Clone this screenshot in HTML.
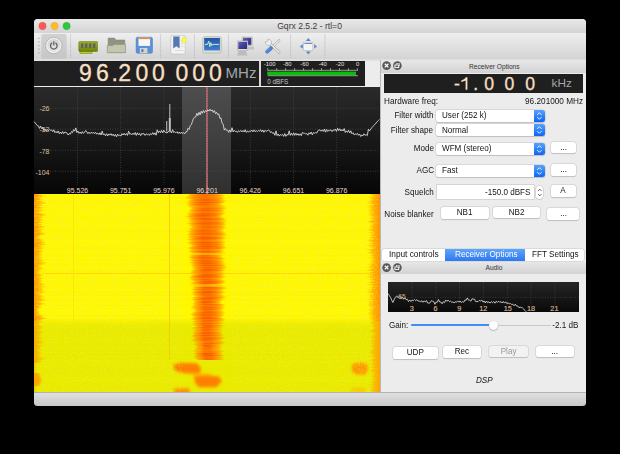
<!DOCTYPE html><html><head><meta charset="utf-8"><style>
*{margin:0;padding:0;box-sizing:border-box}
html,body{width:620px;height:454px;overflow:hidden;background:#000}
body{position:relative;font-family:"Liberation Sans",sans-serif;color:#1a1a1a}
.a{position:absolute}
.t{position:absolute;white-space:nowrap;line-height:1}
.win{position:absolute;left:34px;top:19px;width:552px;height:386px;border-radius:4px;background:#ececec;overflow:hidden}
.title{left:34px;top:19px;width:552px;height:14px;background:linear-gradient(#e9e9e9,#d3d3d3);border-radius:4px 4px 0 0}
.tl{position:absolute;top:22.3px;width:7.4px;height:7.4px;border-radius:50%}
.tb{left:34px;top:33px;width:552px;height:28px;background:linear-gradient(#efefef,#d4d4d4 92%,#dcdcdc 93%,#e2e2e2)}
.sep{position:absolute;top:36px;height:22px;width:1px;border-left:1px dotted #b0b0b0}
.dark{background:#1f1f1f}
.combo{position:absolute;left:436.2px;width:108.4px;height:12px;background:#fff;border-radius:2.5px;box-shadow:0 0 0 0.5px #c8c8c8,0 0.8px 0.8px #b8b8b8}
.combo .bl{position:absolute;right:0;top:0;width:10.8px;height:100%;background:linear-gradient(#55a2fa,#0f66f6);border-radius:0 2.5px 2.5px 0}
.combo svg{position:absolute;right:0;top:0}
.combo span{position:absolute;left:5.8px;top:1.6px;font-size:8.8px;line-height:1;white-space:nowrap;color:#141414;transform:scaleX(0.92);transform-origin:left}
.btn{position:absolute;height:11.8px;background:#fff;border-radius:2.5px;box-shadow:0 0 0 0.5px #c8c8c8,0 0.8px 0.8px #b8b8b8;font-size:8.8px;line-height:11.9px;text-align:center;color:#141414}
.btn b{font-weight:normal;display:inline-block;transform:scaleX(0.92)}
.lbl{position:absolute;font-size:8.8px;line-height:1;white-space:nowrap;color:#141414;transform:scaleX(0.92);transform-origin:left}
.lr{transform-origin:right}
.dtitle{position:absolute;left:381px;width:205px;height:12.5px;background:linear-gradient(#e7e7e7,#d3d3d3)}
.dbtn{position:absolute;width:8.6px;height:8.6px;border-radius:50%;background:#5a5a5a}
</style></head><body>
<div class="win"></div>
<div class="a title"></div>
<svg class="a" style="left:34px;top:19px" width="40" height="14" viewBox="34 19 40 14"><circle cx="42.5" cy="26" r="3.65" fill="#fc5b55" stroke="#e5453f" stroke-width="0.4"/><circle cx="54.6" cy="26" r="3.65" fill="#fdbb2d" stroke="#e0a024" stroke-width="0.4"/><circle cx="66.6" cy="26" r="3.65" fill="#2fc640" stroke="#25a834" stroke-width="0.4"/></svg>
<div class="t" style="left:277.2px;top:22px;font-size:8.6px;color:#3a3a3a">Gqrx 2.5.2 - rtl=0</div>
<div class="a tb"></div>
<svg class="a" style="left:0;top:0" width="620" height="62" viewBox="0 0 620 62">
<defs>
<linearGradient id="pbg" x1="0" y1="0" x2="0" y2="1"><stop offset="0" stop-color="#d2d2d2"/><stop offset="1" stop-color="#c6c6c6"/></linearGradient>
<linearGradient id="pin" x1="0" y1="0" x2="0" y2="1"><stop offset="0" stop-color="#d2d2d2"/><stop offset="1" stop-color="#e6e6e6"/></linearGradient>
<linearGradient id="grn" x1="0" y1="0" x2="0" y2="1"><stop offset="0" stop-color="#9db21c"/><stop offset="1" stop-color="#6f820a"/></linearGradient>
<linearGradient id="scr" x1="0" y1="0" x2="0" y2="1"><stop offset="0" stop-color="#2556a8"/><stop offset="1" stop-color="#3c7cd2"/></linearGradient>
<linearGradient id="nscr" x1="0" y1="0" x2="1" y2="1"><stop offset="0" stop-color="#6464b4"/><stop offset="0.5" stop-color="#40409a"/><stop offset="1" stop-color="#30307c"/></linearGradient>
<radialGradient id="sun"><stop offset="0" stop-color="#ffffa0"/><stop offset="0.6" stop-color="#f4ee30"/><stop offset="1" stop-color="#f4ee30" stop-opacity="0"/></radialGradient>
</defs>
<rect x="41.3" y="34" width="25.4" height="24.7" rx="2" fill="url(#pbg)"/>
<circle cx="53.8" cy="45.5" r="8.2" fill="#f0f0f0" stroke="#a6a6a6" stroke-width="0.7"/>
<circle cx="53.8" cy="45.5" r="6.6" fill="url(#pin)"/>
<path d="M52.1 42.9 A3.3 3.3 0 1 0 55.5 42.9" fill="none" stroke="#5c5c5c" stroke-width="1.25"/>
<line x1="53.8" y1="41.2" x2="53.8" y2="45.4" stroke="#5c5c5c" stroke-width="1.2"/>
<g fill="#8a8a8a"><rect x="38.4" y="37.9" width="1" height="1"/><rect x="38.4" y="41.5" width="1" height="1"/><rect x="38.4" y="45.1" width="1" height="1"/><rect x="38.4" y="48.7" width="1" height="1"/><rect x="38.4" y="52.3" width="1" height="1"/></g>
<g stroke="#b2b2b2" stroke-width="0.9" stroke-dasharray="1,1.05"><line x1="70.6" y1="34.5" x2="70.6" y2="58.5"/><line x1="160.6" y1="34.5" x2="160.6" y2="58.5"/><line x1="194.5" y1="34.5" x2="194.5" y2="58.5"/><line x1="228.5" y1="34.5" x2="228.5" y2="58.5"/><line x1="290.6" y1="34.5" x2="290.6" y2="58.5"/><line x1="324.9" y1="34.5" x2="324.9" y2="58.5"/></g>
<!-- network card -->
<rect x="80" y="51" width="12" height="2.4" fill="#b6d21e" stroke="#6a7a10" stroke-width="0.5"/>
<rect x="78.8" y="41.6" width="18.7" height="9.9" rx="0.8" fill="url(#grn)" stroke="#5e6e08" stroke-width="0.5"/>
<g fill="#5c626a"><rect x="81" y="43.3" width="2.4" height="4.6" rx="0.6"/><rect x="85" y="43.3" width="2.4" height="4.6" rx="0.6"/><rect x="89" y="43.3" width="2.4" height="4.6" rx="0.6"/><rect x="93" y="43.3" width="2.4" height="4.6" rx="0.6"/></g>
<!-- folder -->
<path d="M108.1 52.5 V38.4 Q108.1 38.1 108.4 38.1 H114.6 L115.6 40 H124.5 Q124.8 40 124.8 40.3 V52.5 Z" fill="#8f9582" stroke="#7c8270" stroke-width="0.5"/>
<path d="M107.3 52.7 V45.6 H112.8 L113.8 44.4 H125.5 V52.7 Z" fill="#c3c7ae" stroke="#8a8e7a" stroke-width="0.6"/>
<!-- floppy -->
<rect x="136.1" y="37.2" width="16.4" height="16.1" rx="1.5" fill="#5b8fd6" stroke="#4a78bc" stroke-width="0.5"/>
<rect x="138.5" y="37.8" width="11.6" height="8.1" fill="#f6f6f6"/>
<rect x="138.5" y="37.8" width="11.6" height="1.3" fill="#ef8f2c"/>
<rect x="139.8" y="48" width="7.6" height="5.1" fill="#d4d4cc"/>
<rect x="141.4" y="49.2" width="2" height="2.8" fill="#4a78bc"/>
<!-- bookmark -->
<rect x="170.9" y="35.8" width="14.2" height="18.2" fill="#f4f4f4" stroke="#bdbdbd" stroke-width="0.6"/>
<g stroke="#c8c8c8" stroke-width="0.6"><line x1="180.5" y1="41" x2="183.5" y2="41"/><line x1="180.5" y1="44" x2="183.5" y2="44"/><line x1="180.5" y1="46.5" x2="183.5" y2="46.5"/><line x1="175" y1="50.5" x2="183.5" y2="50.5"/></g>
<path d="M173.2 36.4 H179.6 V48.6 L176.4 46.2 L173.2 48.6 Z" fill="#5479b4"/>
<circle cx="184" cy="40.1" r="3.6" fill="url(#sun)"/>
<!-- monitor -->
<rect x="202.8" y="36.7" width="18.4" height="16.4" rx="1.8" fill="#dadcd6" stroke="#a8aaa4" stroke-width="0.6"/>
<rect x="204.2" y="38" width="15.7" height="12.4" fill="url(#scr)"/>
<polyline points="205,44.4 207.6,44.4 208.7,41 209.8,46.6 210.8,42.6 211.7,45.6 213,44.4 219.2,44.4" fill="none" stroke="#c6f0c2" stroke-width="1"/>
<!-- network computers -->
<rect x="242" y="37" width="10.3" height="8.7" fill="#d8d8d8" stroke="#a8a8a8" stroke-width="0.5"/>
<rect x="243" y="37.8" width="8.3" height="7" fill="url(#nscr)"/>
<rect x="246" y="46.6" width="8" height="3" fill="#c4c4c4"/>
<rect x="237.5" y="40.9" width="10.3" height="9.5" fill="#dcdcdc" stroke="#a8a8a8" stroke-width="0.5"/>
<rect x="238.3" y="41.8" width="8.7" height="7.2" fill="url(#nscr)"/>
<path d="M237 55.5 L238.5 51 H246 L247.5 55.5 Z" fill="#bcbcbc"/>
<!-- tools -->
<path d="M271.3 48 L279.2 40.4" stroke="#a9a9a9" stroke-width="2.3" stroke-linecap="round"/>
<path d="M271.3 48 L279.2 40.4" stroke="#f2f2f2" stroke-width="1.1" stroke-linecap="round"/>
<path d="M269.6 43.6 L279.1 52.3" stroke="#a6a6a6" stroke-width="2.7" stroke-linecap="round"/>
<path d="M269.6 43.6 L279.1 52.3" stroke="#f0f0f0" stroke-width="1.4" stroke-linecap="round"/>
<path d="M267.76 39.25 A3.1 3.1 0 1 1 265.25 41.76 L267.12 42.09 L268.09 41.12 Z" fill="#efefef" stroke="#a4a4a4" stroke-width="0.6" stroke-linejoin="round"/>
<path d="M267.2 51.6 L270.9 48.2" stroke="#4c84d2" stroke-width="4" stroke-linecap="round"/>
<path d="M266.9 50.6 L269.8 48" stroke="#7aa6e6" stroke-width="0.8" stroke-linecap="round"/>
<!-- move -->
<rect x="303.5" y="42.2" width="9.3" height="8.2" fill="#f4f4f4" stroke="#b8b8b8" stroke-width="0.6"/>
<rect x="304.4" y="43" width="7.6" height="0.9" fill="#5a84c8"/>
<g fill="#5a8ad0"><path d="M308.3 37.9 L310.8 40.9 H305.8 Z"/><path d="M308.3 54.4 L310.8 51.6 H305.8 Z"/><path d="M299.8 46.4 L302.8 44 V48.8 Z"/><path d="M317 46.4 L314.1 44 V48.8 Z"/></g>
</svg>
<div class="a dark" style="left:34px;top:61px;width:225px;height:24.6px"></div>
<div class="t" style="left:79.0px;top:62.3px;font-size:23.0px;color:#f7dfc2;-webkit-text-stroke:0.35px #f7dfc2">9</div>
<div class="t" style="left:96.0px;top:62.3px;font-size:23.0px;color:#f7dfc2;-webkit-text-stroke:0.35px #f7dfc2">6</div>
<div class="t" style="left:111.4px;top:62.3px;font-size:23.0px;color:#f7dfc2;-webkit-text-stroke:0.35px #f7dfc2">.</div>
<div class="t" style="left:118.2px;top:62.3px;font-size:23.0px;color:#f7dfc2;-webkit-text-stroke:0.35px #f7dfc2">2</div>
<div class="t" style="left:135.6px;top:62.3px;font-size:23.0px;color:#f7dfc2;-webkit-text-stroke:0.35px #f7dfc2">0</div>
<div class="t" style="left:152.1px;top:62.3px;font-size:23.0px;color:#f7dfc2;-webkit-text-stroke:0.35px #f7dfc2">0</div>
<div class="t" style="left:175.5px;top:62.3px;font-size:23.0px;color:#f7dfc2;-webkit-text-stroke:0.35px #f7dfc2">0</div>
<div class="t" style="left:192.2px;top:62.3px;font-size:23.0px;color:#f7dfc2;-webkit-text-stroke:0.35px #f7dfc2">0</div>
<div class="t" style="left:208.9px;top:62.3px;font-size:23.0px;color:#f7dfc2;-webkit-text-stroke:0.35px #f7dfc2">0</div>
<div class="t" style="left:225.6px;top:64.7px;font-size:15px;color:#a2a6aa">MHz</div>
<div class="a dark" style="left:261px;top:61px;width:104px;height:24.6px"></div>
<svg class="a" style="left:0;top:0" width="620" height="90" viewBox="0 0 620 90"><line x1="267.7" y1="70.3" x2="357.6" y2="70.3" stroke="#cfcfcf" stroke-width="0.7"/><line x1="267.70" y1="68.2" x2="267.70" y2="70.5" stroke="#cfcfcf" stroke-width="0.7"/><line x1="276.67" y1="68.2" x2="276.67" y2="70.5" stroke="#cfcfcf" stroke-width="0.7"/><line x1="285.64" y1="68.2" x2="285.64" y2="70.5" stroke="#cfcfcf" stroke-width="0.7"/><line x1="294.61" y1="68.2" x2="294.61" y2="70.5" stroke="#cfcfcf" stroke-width="0.7"/><line x1="303.58" y1="68.2" x2="303.58" y2="70.5" stroke="#cfcfcf" stroke-width="0.7"/><line x1="312.55" y1="68.2" x2="312.55" y2="70.5" stroke="#cfcfcf" stroke-width="0.7"/><line x1="321.52" y1="68.2" x2="321.52" y2="70.5" stroke="#cfcfcf" stroke-width="0.7"/><line x1="330.49" y1="68.2" x2="330.49" y2="70.5" stroke="#cfcfcf" stroke-width="0.7"/><line x1="339.46" y1="68.2" x2="339.46" y2="70.5" stroke="#cfcfcf" stroke-width="0.7"/><line x1="348.43" y1="68.2" x2="348.43" y2="70.5" stroke="#cfcfcf" stroke-width="0.7"/><line x1="357.40" y1="68.2" x2="357.40" y2="70.5" stroke="#cfcfcf" stroke-width="0.7"/><rect x="267.2" y="71.6" width="88.8" height="3.4" fill="#00c400"/><line x1="267.7" y1="75.7" x2="357.9" y2="75.7" stroke="#bdbdbd" stroke-width="0.8"/></svg>
<div class="t" style="left:254.60px;width:30px;text-align:center;top:61.9px;font-size:5.8px;color:#e2e2e2">-100</div>
<div class="t" style="left:272.30px;width:30px;text-align:center;top:61.9px;font-size:5.8px;color:#e2e2e2">-80</div>
<div class="t" style="left:289.45px;width:30px;text-align:center;top:61.9px;font-size:5.8px;color:#e2e2e2">-60</div>
<div class="t" style="left:307.60px;width:30px;text-align:center;top:61.9px;font-size:5.8px;color:#e2e2e2">-40</div>
<div class="t" style="left:325.05px;width:30px;text-align:center;top:61.9px;font-size:5.8px;color:#e2e2e2">-20</div>
<div class="t" style="left:342.70px;width:30px;text-align:center;top:61.9px;font-size:5.8px;color:#e2e2e2">0</div>
<div class="t" style="left:267.2px;top:78.6px;font-size:6.3px;color:#c8c8c8">0 dBFS</div>
<div class="a" style="left:259px;top:61px;width:2px;height:24.6px;background:#d6d6d6"></div>
<div class="a" style="left:34px;top:87px;width:346px;height:107px;background:linear-gradient(#2a2a2a,#1c1c1c 40%,#060606)"></div>
<div class="a" style="left:182.3px;top:87px;width:48.7px;height:107px;background:rgba(255,255,255,0.17)"></div>
<div class="a" style="left:206.3px;top:87px;width:1.7px;height:107px;background:#b4666c"></div>
<svg class="a" style="left:0;top:0" width="620" height="454" viewBox="0 0 620 454"><line x1="77.5" y1="87" x2="77.5" y2="185" stroke="#4a4a4a" stroke-width="0.7" stroke-dasharray="1,1.5"/><line x1="120.7" y1="87" x2="120.7" y2="185" stroke="#4a4a4a" stroke-width="0.7" stroke-dasharray="1,1.5"/><line x1="163.9" y1="87" x2="163.9" y2="185" stroke="#4a4a4a" stroke-width="0.7" stroke-dasharray="1,1.5"/><line x1="207.1" y1="87" x2="207.1" y2="185" stroke="#4a4a4a" stroke-width="0.7" stroke-dasharray="1,1.5"/><line x1="250.3" y1="87" x2="250.3" y2="185" stroke="#4a4a4a" stroke-width="0.7" stroke-dasharray="1,1.5"/><line x1="293.5" y1="87" x2="293.5" y2="185" stroke="#4a4a4a" stroke-width="0.7" stroke-dasharray="1,1.5"/><line x1="336.7" y1="87" x2="336.7" y2="185" stroke="#4a4a4a" stroke-width="0.7" stroke-dasharray="1,1.5"/><line x1="50" y1="108.2" x2="380" y2="108.2" stroke="#4a4a4a" stroke-width="0.7" stroke-dasharray="1,1.5"/><line x1="50" y1="129.2" x2="380" y2="129.2" stroke="#4a4a4a" stroke-width="0.7" stroke-dasharray="1,1.5"/><line x1="50" y1="150.3" x2="380" y2="150.3" stroke="#4a4a4a" stroke-width="0.7" stroke-dasharray="1,1.5"/><line x1="50" y1="171.3" x2="380" y2="171.3" stroke="#4a4a4a" stroke-width="0.7" stroke-dasharray="1,1.5"/><polyline points="34.0,121.6 35.1,122.9 36.2,124.2 37.3,125.5 38.4,125.8 39.5,128.4 40.6,126.1 41.7,128.7 42.8,127.3 43.9,130.6 45.0,129.0 46.1,130.9 47.2,129.3 48.3,130.6 49.4,129.6 50.5,130.6 51.6,129.8 52.7,131.6 53.8,129.8 54.9,132.7 56.0,131.4 57.1,132.9 58.2,130.9 59.3,133.7 60.4,132.1 61.5,133.8 62.6,131.5 63.7,133.7 64.8,132.1 65.9,132.3 67.0,133.1 68.1,135.0 69.2,133.5 70.3,134.2 71.4,131.6 72.5,132.7 73.6,129.6 74.7,131.2 75.8,127.9 76.9,132.5 78.0,131.0 79.1,133.4 80.2,132.0 81.3,133.7 82.4,131.6 83.5,133.3 84.6,132.4 85.7,130.5 86.8,131.8 87.9,133.7 89.0,132.2 90.1,133.7 91.2,132.3 92.3,133.3 93.4,132.1 94.5,133.7 95.6,132.3 96.7,134.1 97.8,133.0 98.9,134.6 100.0,132.7 101.1,135.0 102.2,131.1 103.3,134.9 104.4,133.8 105.5,135.8 106.6,133.7 107.7,135.9 108.8,133.9 109.9,135.2 111.0,133.7 112.1,135.6 113.2,134.1 114.3,136.2 115.4,134.5 116.5,136.8 117.6,134.1 118.7,135.7 119.8,135.0 120.9,136.1 122.0,133.6 123.1,135.0 124.2,133.3 125.3,135.2 126.4,133.6 127.5,135.4 128.6,131.1 129.7,134.2 130.8,133.6 131.9,134.8 133.0,133.2 134.1,134.6 135.2,132.5 136.3,135.4 137.4,132.8 138.5,135.0 139.6,133.4 140.7,135.7 141.8,133.3 142.9,134.1 144.0,133.5 145.1,135.4 146.2,133.8 147.3,134.8 148.4,133.9 149.5,135.4 150.6,133.6 151.7,134.6 152.8,132.6 153.9,134.6 155.0,132.8 156.1,135.2 157.2,129.8 158.3,132.8 159.4,130.9 160.5,132.7 161.6,130.3 162.7,132.8 163.8,130.2 164.9,132.1 167.1,133.0 168.2,131.4 169.3,131.9 170.4,131.2 171.5,133.0 172.6,129.6 173.7,132.5 174.8,131.7 175.9,132.8 177.0,131.7 178.1,133.5 179.2,132.1 180.3,133.6 181.4,132.0 182.5,133.7 183.6,132.7 184.7,133.8 185.8,131.9 186.9,131.8 188.0,128.3 189.1,129.5 190.2,125.8 191.3,124.7 192.4,121.6 193.5,118.3 194.6,117.4 195.7,117.1 196.8,113.3 197.9,115.6 199.0,112.3 200.1,114.8 201.2,111.2 202.3,113.4 203.4,110.5 204.5,112.6 205.6,110.5 206.7,111.5 207.8,109.8 208.9,111.1 210.0,109.2 211.1,111.1 212.2,109.9 213.3,112.4 214.4,110.5 215.5,113.7 216.6,112.3 217.7,114.7 218.8,113.9 219.9,118.3 221.0,117.9 222.1,123.4 223.2,124.2 224.3,130.1 225.4,128.5 226.5,130.4 227.6,130.2 228.7,132.4 229.8,129.9 230.9,132.2 232.0,127.7 233.1,131.9 234.2,130.3 235.3,131.6 236.4,131.1 237.5,132.4 238.6,130.7 239.7,131.7 240.8,130.4 241.9,131.9 243.0,130.4 244.1,132.0 245.2,129.7 246.3,132.4 247.4,130.8 248.5,132.2 249.6,130.9 250.7,131.5 251.8,130.0 252.9,131.8 254.0,129.9 255.1,131.7 256.2,130.7 257.3,131.5 258.4,130.5 259.5,131.3 260.6,129.7 261.7,131.8 262.8,130.0 263.9,132.3 265.0,130.3 266.1,131.5 267.2,130.7 268.3,130.1 269.4,130.5 270.5,132.5 271.6,131.7 272.7,133.4 273.8,132.8 274.9,135.3 276.0,130.9 277.1,135.6 278.2,134.0 279.3,136.1 280.4,134.5 281.5,135.3 282.6,134.4 283.7,136.4 284.8,133.6 285.9,136.3 287.0,134.4 288.1,135.1 289.2,130.8 290.3,135.4 291.4,133.3 292.5,135.3 293.6,132.8 294.7,135.4 295.8,133.1 296.9,135.2 298.0,133.7 299.1,135.5 300.2,133.8 301.3,135.7 302.4,132.4 303.5,133.2 304.6,133.2 305.7,134.0 306.8,133.6 307.9,135.2 309.0,132.8 310.1,134.1 311.2,132.0 312.3,134.8 313.4,132.6 314.5,133.2 315.6,132.6 316.7,133.1 317.8,131.0 318.9,129.8 320.0,130.2 321.1,131.2 322.2,129.8 323.3,131.4 324.4,129.0 325.5,132.2 326.6,129.4 327.7,131.5 328.8,130.2 329.9,130.3 331.0,130.0 332.1,131.6 333.2,129.8 334.3,130.6 335.4,129.0 336.5,131.4 337.6,128.2 338.7,130.6 339.8,128.8 340.9,131.0 342.0,129.5 343.1,131.0 344.2,128.6 345.3,132.5 346.4,130.8 347.5,132.4 348.6,130.3 349.7,132.9 350.8,130.8 351.9,133.8 353.0,132.7 354.1,134.8 355.2,133.7 356.3,134.7 357.4,133.4 358.5,135.3 359.6,134.0 360.7,136.5 361.8,134.9 362.9,135.9 364.0,133.8 365.1,135.3 366.2,134.6 367.3,135.6 368.4,129.2 369.5,131.0 370.6,129.3 371.7,127.8 372.8,126.6 373.9,125.4 375.0,124.2 376.1,123.0 377.2,121.8 378.3,120.6 379.4,119.4" fill="none" stroke="#e4e4e4" stroke-width="0.85" stroke-linejoin="round"/><rect x="169.1" y="104" width="1.3" height="27" fill="#9c9c9c"/><rect x="168.8" y="118" width="1.9" height="13" fill="#c4c4c4"/><rect x="166.1" y="121" width="1.2" height="10.5" fill="#acacac"/></svg>
<div class="t" style="right:570.5px;top:104.9px;font-size:7px;color:#dcc2a2">-26</div>
<div class="t" style="right:570.5px;top:126.4px;font-size:7px;color:#dcc2a2">-52</div>
<div class="t" style="right:570.5px;top:147.5px;font-size:7px;color:#dcc2a2">-78</div>
<div class="t" style="right:570.5px;top:168.70000000000002px;font-size:7px;color:#dcc2a2">-104</div>
<div class="t" style="left:57.5px;width:40px;text-align:center;top:186.8px;font-size:7px;color:#e4d8c8">95.526</div>
<div class="t" style="left:100.7px;width:40px;text-align:center;top:186.8px;font-size:7px;color:#e4d8c8">95.751</div>
<div class="t" style="left:143.9px;width:40px;text-align:center;top:186.8px;font-size:7px;color:#e4d8c8">95.976</div>
<div class="t" style="left:187.1px;width:40px;text-align:center;top:186.8px;font-size:7px;color:#e4d8c8">96.201</div>
<div class="t" style="left:230.3px;width:40px;text-align:center;top:186.8px;font-size:7px;color:#e4d8c8">96.426</div>
<div class="t" style="left:273.5px;width:40px;text-align:center;top:186.8px;font-size:7px;color:#e4d8c8">96.651</div>
<div class="t" style="left:316.7px;width:40px;text-align:center;top:186.8px;font-size:7px;color:#e4d8c8">96.876</div>
<div class="a" style="left:34px;top:194px;width:346px;height:198px;overflow:hidden;background:#f4ea00"><div class="a" style="left:0;top:0;width:346px;height:198px;filter:blur(0.7px)"><div class="a" style="left:-4px;top:-4px;width:354px;height:1px;background:linear-gradient(90deg,#ffa500 0.0px,#ffa500 4.0px,#ffbd00 8.2px,#fff600 12.5px,#fff600 43.0px,#ffe200 43.6px,#fff600 44.2px,#fff600 156.9px,#ffb000 162.1px,#ff8a00 166.6px,#fb7000 171.8px,#fb7000 177.8px,#ff8a00 184.9px,#ffb000 189.4px,#fff600 194.7px,#fff600 337.0px,#ffaf00 343.5px,#ff9100 350.0px,#ff9100 354.0px)"></div><div class="a" style="left:-4px;top:-3px;width:354px;height:1px;background:linear-gradient(90deg,#ff8e00 0.0px,#ff8e00 4.0px,#ffad00 7.9px,#fff400 11.8px,#fff400 43.0px,#ffe100 43.6px,#fff400 44.2px,#fff400 159.0px,#ffa300 163.0px,#ff7700 167.5px,#f85d00 172.7px,#f85d00 178.7px,#ff7700 186.0px,#ffa300 190.5px,#fff400 196.4px,#fff400 337.7px,#ffaf00 343.9px,#ff9100 350.0px,#ff9100 354.0px)"></div><div class="a" style="left:-4px;top:-2px;width:354px;height:1px;background:linear-gradient(90deg,#ff8c00 0.0px,#ff8c00 4.0px,#ffac00 7.3px,#fff700 10.6px,#fff700 43.0px,#ffe200 43.6px,#fff700 44.2px,#fff700 158.5px,#ffa700 162.6px,#ff7c00 167.1px,#f96200 171.8px,#f96200 177.8px,#ff7c00 184.4px,#ffa700 188.9px,#fff700 193.8px,#fff700 338.8px,#ffb000 344.4px,#ff9100 350.0px,#ff9100 354.0px)"></div><div class="a" style="left:-4px;top:-1px;width:354px;height:1px;background:linear-gradient(90deg,#ff9d00 0.0px,#ff9d00 4.0px,#ffb900 8.2px,#fff800 12.5px,#fff800 43.0px,#ffe300 43.6px,#fff800 44.2px,#fff800 155.9px,#ffae00 162.3px,#ff8500 166.8px,#fa6b00 172.2px,#fa6b00 178.2px,#ff8500 185.6px,#ffae00 190.1px,#fff800 196.1px,#fff800 336.8px,#ffb000 343.4px,#ff9100 350.0px,#ff9100 354.0px)"></div><div class="a" style="left:-4px;top:0px;width:354px;height:1px;background:linear-gradient(90deg,#ff9200 0.0px,#ff9200 4.0px,#ffb100 7.9px,#fff800 11.9px,#fff800 43.0px,#ffe200 43.6px,#fff800 44.2px,#fff800 157.5px,#ffb400 161.5px,#ff9000 166.0px,#fc7600 171.1px,#fc7600 177.1px,#ff9000 184.3px,#ffb400 188.8px,#fff800 194.5px,#fff800 339.1px,#ffb000 344.5px,#ff9100 350.0px,#ff9100 354.0px)"></div><div class="a" style="left:-4px;top:1px;width:354px;height:1px;background:linear-gradient(90deg,#ff8c00 0.0px,#ff8c00 4.0px,#ffad00 9.6px,#fff900 15.1px,#fff900 43.0px,#ffe300 43.6px,#fff900 44.2px,#fff900 156.9px,#ffae00 160.9px,#ff8600 165.4px,#fa6c00 171.9px,#fa6c00 177.9px,#ff8600 186.4px,#ffae00 190.9px,#fff900 195.6px,#fff900 340.6px,#ffb000 345.3px,#ff9100 350.0px,#ff9100 354.0px)"></div><div class="a" style="left:-4px;top:2px;width:354px;height:1px;background:linear-gradient(90deg,#ff9300 0.0px,#ff9300 4.0px,#ffb100 10.0px,#fff700 16.0px,#fff700 43.0px,#ffe200 43.6px,#fff700 44.2px,#fff700 156.2px,#ffb800 160.2px,#ff9600 164.7px,#fd7c00 171.1px,#fd7c00 177.1px,#ff9600 185.5px,#ffb800 190.0px,#fff700 194.2px,#fff700 339.8px,#ffb000 344.9px,#ff9100 350.0px,#ff9100 354.0px)"></div><div class="a" style="left:-4px;top:3px;width:354px;height:1px;background:linear-gradient(90deg,#ffa100 0.0px,#ffa100 4.0px,#ffba00 7.8px,#fff500 11.6px,#fff500 43.0px,#ffe100 43.6px,#fff500 44.2px,#fff500 154.4px,#ffac00 160.1px,#ff8500 164.6px,#fa6b00 171.2px,#fa6b00 177.2px,#ff8500 185.8px,#ffac00 190.3px,#fff500 194.6px,#fff500 337.8px,#ffaf00 343.9px,#ff9100 350.0px,#ff9100 354.0px)"></div><div class="a" style="left:-4px;top:4px;width:354px;height:1px;background:linear-gradient(90deg,#ff9200 0.0px,#ff9200 4.0px,#ffaf00 8.1px,#fff500 12.2px,#fff500 43.0px,#ffe100 43.6px,#fff500 44.2px,#fff500 154.3px,#ffb400 160.4px,#ff9100 164.9px,#fc7700 172.1px,#fc7700 178.1px,#ff9100 187.3px,#ffb400 191.8px,#fff500 196.2px,#fff500 339.0px,#ffaf00 344.5px,#ff9100 350.0px,#ff9100 354.0px)"></div><div class="a" style="left:-4px;top:5px;width:354px;height:1px;background:linear-gradient(90deg,#ff8f00 0.0px,#ff8f00 4.0px,#ffae00 9.0px,#fff800 13.9px,#fff800 43.0px,#ffe300 43.6px,#fff800 44.2px,#fff800 158.7px,#ffa900 162.7px,#ff7f00 167.2px,#f96500 172.4px,#f96500 178.4px,#ff7f00 185.6px,#ffa900 190.1px,#fff800 194.8px,#fff800 339.5px,#ffb000 344.8px,#ff9100 350.0px,#ff9100 354.0px)"></div><div class="a" style="left:-4px;top:6px;width:354px;height:1px;background:linear-gradient(90deg,#ff9b00 0.0px,#ff9b00 4.0px,#ffb600 7.5px,#fff400 11.0px,#fff400 43.0px,#ffe100 43.6px,#fff400 44.2px,#fff400 157.6px,#ffaa00 161.6px,#ff8200 166.1px,#fa6800 172.0px,#fa6800 178.0px,#ff8200 186.0px,#ffaa00 190.5px,#fff400 196.4px,#fff400 338.6px,#ffaf00 344.3px,#ff9100 350.0px,#ff9100 354.0px)"></div><div class="a" style="left:-4px;top:7px;width:354px;height:1px;background:linear-gradient(90deg,#ff9100 0.0px,#ff9100 4.0px,#ffaf00 9.5px,#fff700 14.9px,#fff700 43.0px,#ffe200 43.6px,#fff700 44.2px,#fff700 156.3px,#ffb500 160.7px,#ff9100 165.2px,#fc7700 172.2px,#fc7700 178.2px,#ff9100 187.2px,#ffb500 191.7px,#fff700 197.2px,#fff700 336.3px,#ffb000 343.1px,#ff9100 350.0px,#ff9100 354.0px)"></div><div class="a" style="left:-4px;top:8px;width:354px;height:1px;background:linear-gradient(90deg,#ffa300 0.0px,#ffa300 4.0px,#ffbc00 10.5px,#fff500 17.0px,#fff500 43.0px,#ffe100 43.6px,#fff500 44.2px,#fff500 155.4px,#ffa500 161.7px,#ff7900 166.2px,#f95f00 172.2px,#f95f00 178.2px,#ff7900 186.2px,#ffa500 190.7px,#fff500 195.2px,#fff500 337.5px,#ffaf00 343.7px,#ff9100 350.0px,#ff9100 354.0px)"></div><div class="a" style="left:-4px;top:9px;width:354px;height:1px;background:linear-gradient(90deg,#ff9c00 0.0px,#ff9c00 4.0px,#ffb700 10.5px,#fff500 17.0px,#fff500 43.0px,#ffe100 43.6px,#fff500 44.2px,#fff500 156.7px,#ffb200 161.2px,#ff8e00 165.7px,#fc7400 171.3px,#fc7400 177.3px,#ff8e00 184.9px,#ffb200 189.4px,#fff500 194.5px,#fff500 336.7px,#ffaf00 343.4px,#ff9100 350.0px,#ff9100 354.0px)"></div><div class="a" style="left:-4px;top:10px;width:354px;height:1px;background:linear-gradient(90deg,#ffa500 0.0px,#ffa500 4.0px,#ffbd00 8.7px,#fff700 13.5px,#fff700 43.0px,#ffe200 43.6px,#fff700 44.2px,#fff700 156.7px,#ffa900 160.7px,#ff7f00 165.2px,#f96500 170.5px,#f96500 176.5px,#ff7f00 183.8px,#ffa900 188.3px,#fff700 192.4px,#fff700 340.1px,#ffb000 345.1px,#ff9100 350.0px,#ff9100 354.0px)"></div><div class="a" style="left:-4px;top:11px;width:354px;height:1px;background:linear-gradient(90deg,#ff8f00 0.0px,#ff8f00 4.0px,#ffae00 9.0px,#fff600 14.0px,#fff600 43.0px,#ffe100 43.6px,#fff600 44.2px,#fff600 156.9px,#ffb800 160.9px,#ff9700 165.4px,#fd7d00 171.7px,#fd7d00 177.7px,#ff9700 186.0px,#ffb800 190.5px,#fff600 195.9px,#fff600 338.1px,#ffaf00 344.0px,#ff9100 350.0px,#ff9100 354.0px)"></div><div class="a" style="left:-4px;top:12px;width:354px;height:1px;background:linear-gradient(90deg,#ff8c00 0.0px,#ff8c00 4.0px,#ffac00 7.3px,#fff500 10.6px,#fff500 43.0px,#ffe100 43.6px,#fff500 44.2px,#fff500 157.2px,#ffb700 162.7px,#ff9600 167.2px,#fd7c00 172.9px,#fd7c00 178.9px,#ff9600 186.5px,#ffb700 191.0px,#fff500 196.0px,#fff500 337.3px,#ffaf00 343.7px,#ff9100 350.0px,#ff9100 354.0px)"></div><div class="a" style="left:-4px;top:13px;width:354px;height:1px;background:linear-gradient(90deg,#ff8e00 0.0px,#ff8e00 4.0px,#ffad00 9.8px,#fff600 15.6px,#fff600 43.0px,#ffe100 43.6px,#fff600 44.2px,#fff600 158.5px,#ffb600 162.5px,#ff9400 167.0px,#fc7a00 173.0px,#fc7a00 179.0px,#ff9400 186.9px,#ffb600 191.4px,#fff600 196.8px,#fff600 337.0px,#ffaf00 343.5px,#ff9100 350.0px,#ff9100 354.0px)"></div><div class="a" style="left:-4px;top:14px;width:354px;height:1px;background:linear-gradient(90deg,#ff9f00 0.0px,#ff9f00 4.0px,#ffba00 8.7px,#fff900 13.4px,#fff900 43.0px,#ffe300 43.6px,#fff900 44.2px,#fff900 159.4px,#ffad00 163.4px,#ff8400 167.9px,#fa6a00 173.7px,#fa6a00 179.7px,#ff8400 187.5px,#ffad00 192.0px,#fff900 197.8px,#fff900 338.1px,#ffb000 344.1px,#ff9100 350.0px,#ff9100 354.0px)"></div><div class="a" style="left:-4px;top:15px;width:354px;height:1px;background:linear-gradient(90deg,#ff9c00 0.0px,#ff9c00 4.0px,#ffb700 8.3px,#fff700 12.7px,#fff700 43.0px,#ffe200 43.6px,#fff700 44.2px,#fff700 159.1px,#ffb100 163.1px,#ff8b00 167.6px,#fb7100 172.4px,#fb7100 178.4px,#ff8b00 185.3px,#ffb100 189.8px,#fff700 195.5px,#fff700 337.4px,#ffb000 343.7px,#ff9100 350.0px,#ff9100 354.0px)"></div><div class="a" style="left:-4px;top:16px;width:354px;height:1px;background:linear-gradient(90deg,#ff9b00 0.0px,#ff9b00 4.0px,#ffb700 9.4px,#fff600 14.7px,#fff600 43.0px,#ffe100 43.6px,#fff600 44.2px,#fff600 158.3px,#ffa500 162.3px,#ff7900 166.8px,#f85f00 172.7px,#f85f00 178.7px,#ff7900 186.6px,#ffa500 191.1px,#fff600 195.2px,#fff600 338.0px,#ffaf00 344.0px,#ff9100 350.0px,#ff9100 354.0px)"></div><div class="a" style="left:-4px;top:17px;width:354px;height:1px;background:linear-gradient(90deg,#ff9f00 0.0px,#ff9f00 4.0px,#ffb900 8.1px,#fff600 12.2px,#fff600 43.0px,#ffe200 43.6px,#fff600 44.2px,#fff600 158.1px,#ffb700 162.2px,#ff9500 166.7px,#fd7b00 172.6px,#fd7b00 178.6px,#ff9500 186.6px,#ffb700 191.1px,#fff600 195.7px,#fff600 337.6px,#ffaf00 343.8px,#ff9100 350.0px,#ff9100 354.0px)"></div><div class="a" style="left:-4px;top:18px;width:354px;height:1px;background:linear-gradient(90deg,#ffa400 0.0px,#ffa400 4.0px,#ffbc00 7.4px,#fff500 10.8px,#fff500 43.0px,#ffe100 43.6px,#fff500 44.2px,#fff500 157.0px,#ffb600 162.6px,#ff9400 167.1px,#fc7a00 172.5px,#fc7a00 178.5px,#ff9400 186.0px,#ffb600 190.5px,#fff500 194.9px,#fff500 338.8px,#ffaf00 344.4px,#ff9100 350.0px,#ff9100 354.0px)"></div><div class="a" style="left:-4px;top:19px;width:354px;height:1px;background:linear-gradient(90deg,#ffa400 0.0px,#ffa400 4.0px,#ffbd00 9.6px,#fff800 15.2px,#fff800 43.0px,#ffe300 43.6px,#fff800 44.2px,#fff800 156.7px,#ffaa00 161.9px,#ff8100 166.4px,#fa6700 172.3px,#fa6700 178.3px,#ff8100 186.1px,#ffaa00 190.6px,#fff800 196.3px,#fff800 336.8px,#ffb000 343.4px,#ff9100 350.0px,#ff9100 354.0px)"></div><div class="a" style="left:-4px;top:20px;width:354px;height:1px;background:linear-gradient(90deg,#ff9300 0.0px,#ff9300 4.0px,#ffb100 10.6px,#fff800 17.1px,#fff800 43.0px,#ffe200 43.6px,#fff800 44.2px,#fff800 156.0px,#ffa900 161.0px,#ff7f00 165.5px,#f96500 171.6px,#f96500 177.6px,#ff7f00 185.8px,#ffa900 190.3px,#fff800 195.5px,#fff800 338.5px,#ffb000 344.3px,#ff9100 350.0px,#ff9100 354.0px)"></div><div class="a" style="left:-4px;top:21px;width:354px;height:1px;background:linear-gradient(90deg,#ffa600 0.0px,#ffa600 4.0px,#ffbe00 10.6px,#fff600 17.2px,#fff600 43.0px,#ffe100 43.6px,#fff600 44.2px,#fff600 157.3px,#ffa300 161.3px,#ff7700 165.8px,#f85d00 171.1px,#f85d00 177.1px,#ff7700 184.4px,#ffa300 188.9px,#fff600 193.0px,#fff600 337.5px,#ffaf00 343.7px,#ff9100 350.0px,#ff9100 354.0px)"></div><div class="a" style="left:-4px;top:22px;width:354px;height:1px;background:linear-gradient(90deg,#ffa100 0.0px,#ffa100 4.0px,#ffbb00 8.9px,#fff700 13.7px,#fff700 43.0px,#ffe200 43.6px,#fff700 44.2px,#fff700 154.2px,#ffad00 160.2px,#ff8500 164.7px,#fa6b00 170.3px,#fa6b00 176.3px,#ff8500 183.9px,#ffad00 188.4px,#fff700 192.9px,#fff700 340.3px,#ffb000 345.1px,#ff9100 350.0px,#ff9100 354.0px)"></div><div class="a" style="left:-4px;top:23px;width:354px;height:1px;background:linear-gradient(90deg,#ff9800 0.0px,#ff9800 4.0px,#ffb300 9.2px,#fff400 14.4px,#fff400 43.0px,#ffe100 43.6px,#fff400 44.2px,#fff400 157.5px,#ffb400 161.5px,#ff9100 166.0px,#fc7700 171.7px,#fc7700 177.7px,#ff9100 185.3px,#ffb400 189.8px,#fff400 195.2px,#fff400 340.0px,#ffaf00 345.0px,#ff9100 350.0px,#ff9100 354.0px)"></div><div class="a" style="left:-4px;top:24px;width:354px;height:1px;background:linear-gradient(90deg,#ff8c00 0.0px,#ff8c00 4.0px,#ffac00 7.9px,#fff600 11.8px,#fff600 43.0px,#ffe200 43.6px,#fff600 44.2px,#fff600 156.8px,#ffa700 161.7px,#ff7c00 166.2px,#f96200 172.2px,#f96200 178.2px,#ff7c00 186.2px,#ffa700 190.7px,#fff600 196.1px,#fff600 338.4px,#ffaf00 344.2px,#ff9100 350.0px,#ff9100 354.0px)"></div><div class="a" style="left:-4px;top:25px;width:354px;height:1px;background:linear-gradient(90deg,#ff9700 0.0px,#ff9700 4.0px,#ffb300 9.2px,#fff700 14.5px,#fff700 43.0px,#ffe200 43.6px,#fff700 44.2px,#fff700 158.7px,#ffa500 162.7px,#ff7900 167.2px,#f85f00 173.3px,#f85f00 179.3px,#ff7900 187.3px,#ffa500 191.8px,#fff700 197.3px,#fff700 340.4px,#ffb000 345.2px,#ff9100 350.0px,#ff9100 354.0px)"></div><div class="a" style="left:-4px;top:26px;width:354px;height:1px;background:linear-gradient(90deg,#ffa400 0.0px,#ffa400 4.0px,#ffbd00 9.4px,#fff600 14.7px,#fff600 43.0px,#ffe200 43.6px,#fff600 44.2px,#fff600 158.0px,#ffb600 162.0px,#ff9400 166.5px,#fc7a00 172.6px,#fc7a00 178.6px,#ff9400 186.8px,#ffb600 191.3px,#fff600 197.1px,#fff600 338.7px,#ffaf00 344.3px,#ff9100 350.0px,#ff9100 354.0px)"></div><div class="a" style="left:-4px;top:27px;width:354px;height:1px;background:linear-gradient(90deg,#ff9f00 0.0px,#ff9f00 4.0px,#ffba00 8.0px,#fff700 12.0px,#fff700 43.0px,#ffe200 43.6px,#fff700 44.2px,#fff700 156.8px,#ffb300 162.9px,#ff8e00 167.4px,#fc7400 173.1px,#fc7400 179.1px,#ff8e00 186.7px,#ffb300 191.2px,#fff700 197.2px,#fff700 336.1px,#ffb000 343.1px,#ff9100 350.0px,#ff9100 354.0px)"></div><div class="a" style="left:-4px;top:28px;width:354px;height:1px;background:linear-gradient(90deg,#ff9500 0.0px,#ff9500 4.0px,#ffb200 9.4px,#fff700 14.8px,#fff700 43.0px,#ffe200 43.6px,#fff700 44.2px,#fff700 158.6px,#ffab00 163.7px,#ff8200 168.2px,#fa6800 173.8px,#fa6800 179.8px,#ff8200 187.4px,#ffab00 191.9px,#fff700 197.0px,#fff700 337.2px,#ffb000 343.6px,#ff9100 350.0px,#ff9100 354.0px)"></div><div class="a" style="left:-4px;top:29px;width:354px;height:1px;background:linear-gradient(90deg,#ffa200 0.0px,#ffa200 4.0px,#ffbb00 7.5px,#fff600 10.9px,#fff600 43.0px,#ffe200 43.6px,#fff600 44.2px,#fff600 155.7px,#ffa700 161.5px,#ff7c00 166.0px,#f96200 172.8px,#f96200 178.8px,#ff7c00 187.5px,#ffa700 192.0px,#fff600 196.3px,#fff600 340.3px,#ffaf00 345.1px,#ff9100 350.0px,#ff9100 354.0px)"></div><div class="a" style="left:-4px;top:30px;width:354px;height:1px;background:linear-gradient(90deg,#ffa200 0.0px,#ffa200 4.0px,#ffbc00 9.0px,#fff700 13.9px,#fff700 43.0px,#ffe200 43.6px,#fff700 44.2px,#fff700 158.3px,#ffae00 162.3px,#ff8700 166.8px,#fa6d00 173.5px,#fa6d00 179.5px,#ff8700 188.1px,#ffae00 192.6px,#fff700 196.8px,#fff700 339.9px,#ffaf00 344.9px,#ff9100 350.0px,#ff9100 354.0px)"></div><div class="a" style="left:-4px;top:31px;width:354px;height:1px;background:linear-gradient(90deg,#ff9f00 0.0px,#ff9f00 4.0px,#ffba00 8.1px,#fff700 12.3px,#fff700 43.0px,#ffe200 43.6px,#fff700 44.2px,#fff700 158.6px,#ffb500 162.6px,#ff9200 167.1px,#fc7800 173.0px,#fc7800 179.0px,#ff9200 187.0px,#ffb500 191.5px,#fff700 196.1px,#fff700 339.1px,#ffaf00 344.5px,#ff9100 350.0px,#ff9100 354.0px)"></div><div class="a" style="left:-4px;top:32px;width:354px;height:1px;background:linear-gradient(90deg,#ff9200 0.0px,#ff9200 4.0px,#ffb000 9.8px,#fff800 15.7px,#fff800 43.0px,#ffe300 43.6px,#fff800 44.2px,#fff800 159.3px,#ffaf00 163.3px,#ff8800 167.8px,#fb6e00 173.9px,#fb6e00 179.9px,#ff8800 187.9px,#ffaf00 192.4px,#fff800 196.8px,#fff800 338.3px,#ffb000 344.2px,#ff9100 350.0px,#ff9100 354.0px)"></div><div class="a" style="left:-4px;top:33px;width:354px;height:1px;background:linear-gradient(90deg,#ff8d00 0.0px,#ff8d00 4.0px,#ffac00 9.5px,#fff700 15.1px,#fff700 43.0px,#ffe200 43.6px,#fff700 44.2px,#fff700 160.1px,#ffac00 164.1px,#ff8300 168.6px,#fa6900 173.7px,#fa6900 179.7px,#ff8300 186.9px,#ffac00 191.4px,#fff700 196.5px,#fff700 338.5px,#ffaf00 344.3px,#ff9100 350.0px,#ff9100 354.0px)"></div><div class="a" style="left:-4px;top:34px;width:354px;height:1px;background:linear-gradient(90deg,#ff9a00 0.0px,#ff9a00 4.0px,#ffb600 7.6px,#fff700 11.3px,#fff700 43.0px,#ffe200 43.6px,#fff700 44.2px,#fff700 157.6px,#ffb700 162.8px,#ff9500 167.3px,#fd7b00 173.5px,#fd7b00 179.5px,#ff9500 187.8px,#ffb700 192.3px,#fff700 196.6px,#fff700 338.8px,#ffb000 344.4px,#ff9100 350.0px,#ff9100 354.0px)"></div><div class="a" style="left:-4px;top:35px;width:354px;height:1px;background:linear-gradient(90deg,#ff9900 0.0px,#ff9900 4.0px,#ffb500 9.6px,#fff800 15.2px,#fff800 43.0px,#ffe300 43.6px,#fff800 44.2px,#fff800 157.8px,#ffb100 161.8px,#ff8b00 166.3px,#fb7100 172.1px,#fb7100 178.1px,#ff8b00 185.8px,#ffb100 190.3px,#fff800 194.5px,#fff800 337.1px,#ffb000 343.6px,#ff9100 350.0px,#ff9100 354.0px)"></div><div class="a" style="left:-4px;top:36px;width:354px;height:1px;background:linear-gradient(90deg,#ff9200 0.0px,#ff9200 4.0px,#ffaf00 8.1px,#fff400 12.2px,#fff400 43.0px,#ffe100 43.6px,#fff400 44.2px,#fff400 158.5px,#ffaa00 162.5px,#ff8200 167.0px,#fa6800 172.1px,#fa6800 178.1px,#ff8200 185.2px,#ffaa00 189.7px,#fff400 193.9px,#fff400 337.3px,#ffaf00 343.7px,#ff9100 350.0px,#ff9100 354.0px)"></div><div class="a" style="left:-4px;top:37px;width:354px;height:1px;background:linear-gradient(90deg,#ff9300 0.0px,#ff9300 4.0px,#ffb000 8.5px,#fff500 13.0px,#fff500 43.0px,#ffe100 43.6px,#fff500 44.2px,#fff500 156.4px,#ffac00 161.4px,#ff8500 165.9px,#fa6b00 171.7px,#fa6b00 177.7px,#ff8500 185.6px,#ffac00 190.1px,#fff500 195.1px,#fff500 340.2px,#ffaf00 345.1px,#ff9100 350.0px,#ff9100 354.0px)"></div><div class="a" style="left:-4px;top:38px;width:354px;height:1px;background:linear-gradient(90deg,#ff9d00 0.0px,#ff9d00 4.0px,#ffb700 9.1px,#fff500 14.2px,#fff500 43.0px,#ffe100 43.6px,#fff500 44.2px,#fff500 157.8px,#ffb000 161.8px,#ff8b00 166.3px,#fb7100 172.6px,#fb7100 178.6px,#ff8b00 186.8px,#ffb000 191.3px,#fff500 195.8px,#fff500 337.3px,#ffaf00 343.6px,#ff9100 350.0px,#ff9100 354.0px)"></div><div class="a" style="left:-4px;top:39px;width:354px;height:1px;background:linear-gradient(90deg,#ff9500 0.0px,#ff9500 4.0px,#ffb200 10.2px,#fff800 16.4px,#fff800 43.0px,#ffe300 43.6px,#fff800 44.2px,#fff800 157.4px,#ffa800 161.4px,#ff7d00 165.9px,#f96300 172.8px,#f96300 178.8px,#ff7d00 187.6px,#ffa800 192.1px,#fff800 197.9px,#fff800 340.3px,#ffb000 345.2px,#ff9100 350.0px,#ff9100 354.0px)"></div><div class="a" style="left:-4px;top:40px;width:354px;height:1px;background:linear-gradient(90deg,#ff9300 0.0px,#ff9300 4.0px,#ffb000 10.1px,#fff500 16.2px,#fff500 43.0px,#ffe100 43.6px,#fff500 44.2px,#fff500 156.6px,#ffac00 160.6px,#ff8400 165.1px,#fa6a00 172.4px,#fa6a00 178.4px,#ff8400 187.8px,#ffac00 192.3px,#fff500 196.5px,#fff500 339.0px,#ffaf00 344.5px,#ff9100 350.0px,#ff9100 354.0px)"></div><div class="a" style="left:-4px;top:41px;width:354px;height:1px;background:linear-gradient(90deg,#ff9100 0.0px,#ff9100 4.0px,#ffb000 7.7px,#fff700 11.4px,#fff700 43.0px,#ffe200 43.6px,#fff700 44.2px,#fff700 156.8px,#ffb800 162.0px,#ff9700 166.5px,#fd7d00 173.3px,#fd7d00 179.3px,#ff9700 188.1px,#ffb800 192.6px,#fff700 198.1px,#fff700 338.5px,#ffb000 344.2px,#ff9100 350.0px,#ff9100 354.0px)"></div><div class="a" style="left:-4px;top:42px;width:354px;height:1px;background:linear-gradient(90deg,#ff8e00 0.0px,#ff8e00 4.0px,#ffae00 7.3px,#fff700 10.6px,#fff700 43.0px,#ffe200 43.6px,#fff700 44.2px,#fff700 157.0px,#ffaf00 161.0px,#ff8900 165.5px,#fb6f00 171.4px,#fb6f00 177.4px,#ff8900 185.4px,#ffaf00 189.9px,#fff700 195.1px,#fff700 340.3px,#ffb000 345.1px,#ff9100 350.0px,#ff9100 354.0px)"></div><div class="a" style="left:-4px;top:43px;width:354px;height:1px;background:linear-gradient(90deg,#ffa200 0.0px,#ffa200 4.0px,#ffbb00 7.2px,#fff500 10.4px,#fff500 43.0px,#ffe100 43.6px,#fff500 44.2px,#fff500 156.8px,#ffa500 163.1px,#ff7900 167.6px,#f85f00 173.3px,#f85f00 179.3px,#ff7900 187.0px,#ffa500 191.5px,#fff500 196.4px,#fff500 337.2px,#ffaf00 343.6px,#ff9100 350.0px,#ff9100 354.0px)"></div><div class="a" style="left:-4px;top:44px;width:354px;height:1px;background:linear-gradient(90deg,#ff9a00 0.0px,#ff9a00 4.0px,#ffb500 8.0px,#fff600 12.0px,#fff600 43.0px,#ffe100 43.6px,#fff600 44.2px,#fff600 158.6px,#ffa300 162.6px,#ff7600 167.1px,#f85c00 172.9px,#f85c00 178.9px,#ff7600 186.7px,#ffa300 191.2px,#fff600 196.9px,#fff600 340.1px,#ffaf00 345.0px,#ff9100 350.0px,#ff9100 354.0px)"></div><div class="a" style="left:-4px;top:45px;width:354px;height:1px;background:linear-gradient(90deg,#ff9700 0.0px,#ff9700 4.0px,#ffb300 9.2px,#fff600 14.5px,#fff600 43.0px,#ffe200 43.6px,#fff600 44.2px,#fff600 155.4px,#ffae00 161.6px,#ff8700 166.1px,#fb6d00 171.6px,#fb6d00 177.6px,#ff8700 185.1px,#ffae00 189.6px,#fff600 195.2px,#fff600 337.5px,#ffaf00 343.7px,#ff9100 350.0px,#ff9100 354.0px)"></div><div class="a" style="left:-4px;top:46px;width:354px;height:1px;background:linear-gradient(90deg,#ff9700 0.0px,#ff9700 4.0px,#ffb400 9.4px,#fff800 14.8px,#fff800 43.0px,#ffe300 43.6px,#fff800 44.2px,#fff800 158.3px,#ffb900 162.3px,#ff9700 166.8px,#fd7d00 172.1px,#fd7d00 178.1px,#ff9700 185.5px,#ffb900 190.0px,#fff800 194.5px,#fff800 336.4px,#ffb000 343.2px,#ff9100 350.0px,#ff9100 354.0px)"></div><div class="a" style="left:-4px;top:47px;width:354px;height:1px;background:linear-gradient(90deg,#ffa200 0.0px,#ffa200 4.0px,#ffbc00 9.9px,#fff800 15.8px,#fff800 43.0px,#ffe200 43.6px,#fff800 44.2px,#fff800 158.2px,#ffb700 162.2px,#ff9400 166.7px,#fc7a00 172.8px,#fc7a00 178.8px,#ff9400 186.9px,#ffb700 191.4px,#fff800 196.9px,#fff800 337.2px,#ffb000 343.6px,#ff9100 350.0px,#ff9100 354.0px)"></div><div class="a" style="left:-4px;top:48px;width:354px;height:1px;background:linear-gradient(90deg,#ff8e00 0.0px,#ff8e00 4.0px,#ffad00 10.0px,#fff600 15.9px,#fff600 43.0px,#ffe200 43.6px,#fff600 44.2px,#fff600 156.4px,#ffa300 161.9px,#ff7600 166.4px,#f85c00 172.3px,#f85c00 178.3px,#ff7600 186.2px,#ffa300 190.7px,#fff600 196.0px,#fff600 339.8px,#ffaf00 344.9px,#ff9100 350.0px,#ff9100 354.0px)"></div><div class="a" style="left:-4px;top:49px;width:354px;height:1px;background:linear-gradient(90deg,#ff9500 0.0px,#ff9500 4.0px,#ffb300 9.8px,#fff900 15.6px,#fff900 43.0px,#ffe300 43.6px,#fff900 44.2px,#fff900 156.4px,#ffaf00 162.8px,#ff8800 167.3px,#fb6e00 172.7px,#fb6e00 178.7px,#ff8800 186.2px,#ffaf00 190.7px,#fff900 196.0px,#fff900 337.5px,#ffb000 343.7px,#ff9100 350.0px,#ff9100 354.0px)"></div><div class="a" style="left:-4px;top:50px;width:354px;height:1px;background:linear-gradient(90deg,#ff8d00 0.0px,#ff8d00 4.0px,#ffad00 10.7px,#fff800 17.5px,#fff800 43.0px,#ffe200 43.6px,#fff800 44.2px,#fff800 159.1px,#ffa900 163.1px,#ff7f00 167.6px,#f96500 173.2px,#f96500 179.2px,#ff7f00 186.8px,#ffa900 191.3px,#fff800 195.4px,#fff800 340.0px,#ffb000 345.0px,#ff9100 350.0px,#ff9100 354.0px)"></div><div class="a" style="left:-4px;top:51px;width:354px;height:1px;background:linear-gradient(90deg,#ff9300 0.0px,#ff9300 4.0px,#ffb000 8.2px,#fff600 12.4px,#fff600 43.0px,#ffe100 43.6px,#fff600 44.2px,#fff600 160.1px,#ffae00 164.1px,#ff8700 168.6px,#fa6d00 173.5px,#fa6d00 179.5px,#ff8700 186.4px,#ffae00 190.9px,#fff600 196.1px,#fff600 336.0px,#ffaf00 343.0px,#ff9100 350.0px,#ff9100 354.0px)"></div><div class="a" style="left:-4px;top:52px;width:354px;height:1px;background:linear-gradient(90deg,#ff8e00 0.0px,#ff8e00 4.0px,#ffae00 9.6px,#fff700 15.1px,#fff700 43.0px,#ffe200 43.6px,#fff700 44.2px,#fff700 159.8px,#ffa400 163.8px,#ff7800 168.3px,#f85e00 173.6px,#f85e00 179.6px,#ff7800 186.9px,#ffa400 191.4px,#fff700 195.7px,#fff700 338.6px,#ffb000 344.3px,#ff9100 350.0px,#ff9100 354.0px)"></div><div class="a" style="left:-4px;top:53px;width:354px;height:1px;background:linear-gradient(90deg,#ff9c00 0.0px,#ff9c00 4.0px,#ffb700 9.1px,#fff500 14.1px,#fff500 43.0px,#ffe100 43.6px,#fff500 44.2px,#fff500 158.0px,#ffac00 162.0px,#ff8400 166.5px,#fa6a00 173.1px,#fa6a00 179.1px,#ff8400 187.8px,#ffac00 192.3px,#fff500 197.5px,#fff500 339.2px,#ffaf00 344.6px,#ff9100 350.0px,#ff9100 354.0px)"></div><div class="a" style="left:-4px;top:54px;width:354px;height:1px;background:linear-gradient(90deg,#ff9b00 0.0px,#ff9b00 4.0px,#ffb600 9.4px,#fff500 14.8px,#fff500 43.0px,#ffe100 43.6px,#fff500 44.2px,#fff500 157.2px,#ffa900 161.8px,#ff8000 166.3px,#f96600 172.9px,#f96600 178.9px,#ff8000 187.5px,#ffa900 192.0px,#fff500 196.1px,#fff500 340.2px,#ffaf00 345.1px,#ff9100 350.0px,#ff9100 354.0px)"></div><div class="a" style="left:-4px;top:55px;width:354px;height:1px;background:linear-gradient(90deg,#ffa400 0.0px,#ffa400 4.0px,#ffbd00 8.6px,#fff800 13.3px,#fff800 43.0px,#ffe200 43.6px,#fff800 44.2px,#fff800 159.1px,#ffb900 163.1px,#ff9700 167.6px,#fd7d00 172.4px,#fd7d00 178.4px,#ff9700 185.1px,#ffb900 189.6px,#fff800 193.8px,#fff800 336.5px,#ffb000 343.2px,#ff9100 350.0px,#ff9100 354.0px)"></div><div class="a" style="left:-4px;top:56px;width:354px;height:1px;background:linear-gradient(90deg,#ffa600 0.0px,#ffa600 4.0px,#ffbe00 8.6px,#fff600 13.3px,#fff600 43.0px,#ffe200 43.6px,#fff600 44.2px,#fff600 158.3px,#ffb700 162.3px,#ff9500 166.8px,#fd7b00 172.2px,#fd7b00 178.2px,#ff9500 185.5px,#ffb700 190.0px,#fff600 195.0px,#fff600 336.1px,#ffaf00 343.1px,#ff9100 350.0px,#ff9100 354.0px)"></div><div class="a" style="left:-4px;top:57px;width:354px;height:1px;background:linear-gradient(90deg,#ff8f00 0.0px,#ff8f00 4.0px,#ffaf00 9.0px,#fff800 14.1px,#fff800 43.0px,#ffe300 43.6px,#fff800 44.2px,#fff800 157.8px,#ffa800 163.0px,#ff7d00 167.5px,#f96300 172.5px,#f96300 178.5px,#ff7d00 185.5px,#ffa800 190.0px,#fff800 194.2px,#fff800 338.8px,#ffb000 344.4px,#ff9100 350.0px,#ff9100 354.0px)"></div><div class="a" style="left:-4px;top:58px;width:354px;height:1px;background:linear-gradient(90deg,#ff9300 0.0px,#ff9300 4.0px,#ffb100 8.7px,#fff700 13.4px,#fff700 43.0px,#ffe200 43.6px,#fff700 44.2px,#fff700 159.3px,#ffb400 163.3px,#ff9000 167.8px,#fc7600 172.6px,#fc7600 178.6px,#ff9000 185.4px,#ffb400 189.9px,#fff700 195.9px,#fff700 336.2px,#ffb000 343.1px,#ff9100 350.0px,#ff9100 354.0px)"></div><div class="a" style="left:-4px;top:59px;width:354px;height:1px;background:linear-gradient(90deg,#ff8f00 0.0px,#ff8f00 4.0px,#ffae00 7.9px,#fff800 11.8px,#fff800 43.0px,#ffe200 43.6px,#fff800 44.2px,#fff800 159.8px,#ffd400 164.4px,#ffc100 168.9px,#fda800 173.7px,#fda800 179.7px,#ffc100 186.5px,#ffd400 191.0px,#fff800 196.3px,#fff800 338.2px,#ffb000 344.1px,#ff9100 350.0px,#ff9100 354.0px)"></div><div class="a" style="left:-4px;top:60px;width:354px;height:1px;background:linear-gradient(90deg,#ffa000 0.0px,#ffa000 4.0px,#ffba00 8.8px,#fff700 13.7px,#fff700 43.0px,#ffe200 43.6px,#fff700 44.2px,#fff700 158.9px,#ffd800 162.9px,#ffc700 167.4px,#fead00 172.3px,#fead00 178.3px,#ffc700 185.3px,#ffd800 189.8px,#fff700 195.6px,#fff700 340.8px,#ffb000 345.4px,#ff9100 350.0px,#ff9100 354.0px)"></div><div class="a" style="left:-4px;top:61px;width:354px;height:1px;background:linear-gradient(90deg,#ff9700 0.0px,#ff9700 4.0px,#ffb300 8.0px,#fff400 12.1px,#fff400 43.0px,#ffe100 43.6px,#fff400 44.2px,#fff400 159.2px,#ffae00 163.4px,#ff8800 167.9px,#fb6e00 172.1px,#fb6e00 178.1px,#ff8800 184.2px,#ffae00 188.7px,#fff400 194.1px,#fff400 338.2px,#ffaf00 344.1px,#ff9100 350.0px,#ff9100 354.0px)"></div><div class="a" style="left:-4px;top:62px;width:354px;height:1px;background:linear-gradient(90deg,#ff9900 0.0px,#ff9900 4.0px,#ffb500 8.0px,#fff700 12.1px,#fff700 43.0px,#ffe200 43.6px,#fff700 44.2px,#fff700 158.5px,#ffb300 162.5px,#ff8f00 167.0px,#fc7500 171.7px,#fc7500 177.7px,#ff8f00 184.5px,#ffb300 189.0px,#fff700 193.1px,#fff700 340.4px,#ffb000 345.2px,#ff9100 350.0px,#ff9100 354.0px)"></div><div class="a" style="left:-4px;top:63px;width:354px;height:1px;background:linear-gradient(90deg,#ffa100 0.0px,#ffa100 4.0px,#ffbb00 8.9px,#fff800 13.8px,#fff800 43.0px,#ffe300 43.6px,#fff800 44.2px,#fff800 158.1px,#ffa900 162.1px,#ff7f00 166.6px,#f96500 171.7px,#f96500 177.7px,#ff7f00 184.9px,#ffa900 189.4px,#fff800 194.1px,#fff800 337.7px,#ffb000 343.9px,#ff9100 350.0px,#ff9100 354.0px)"></div><div class="a" style="left:-4px;top:64px;width:354px;height:1px;background:linear-gradient(90deg,#ff9b00 0.0px,#ff9b00 4.0px,#ffb700 8.2px,#fff900 12.4px,#fff900 43.0px,#ffe300 43.6px,#fff900 44.2px,#fff900 159.2px,#ffad00 163.5px,#ff8400 168.0px,#fa6a00 173.3px,#fa6a00 179.3px,#ff8400 186.7px,#ffad00 191.2px,#fff900 196.9px,#fff900 340.6px,#ffb000 345.3px,#ff9100 350.0px,#ff9100 354.0px)"></div><div class="a" style="left:-4px;top:65px;width:354px;height:1px;background:linear-gradient(90deg,#ff9900 0.0px,#ff9900 4.0px,#ffb400 8.8px,#fff400 13.5px,#fff400 43.0px,#ffe100 43.6px,#fff400 44.2px,#fff400 159.5px,#ffb300 164.0px,#ff9000 168.5px,#fc7600 173.0px,#fc7600 179.0px,#ff9000 185.6px,#ffb300 190.1px,#fff400 195.4px,#fff400 340.6px,#ffaf00 345.3px,#ff9100 350.0px,#ff9100 354.0px)"></div><div class="a" style="left:-4px;top:66px;width:354px;height:1px;background:linear-gradient(90deg,#ff9e00 0.0px,#ff9e00 4.0px,#ffb800 9.5px,#fff600 15.0px,#fff600 43.0px,#ffe100 43.6px,#fff600 44.2px,#fff600 159.1px,#ffaa00 163.1px,#ff8200 167.6px,#fa6800 172.1px,#fa6800 178.1px,#ff8200 184.5px,#ffaa00 189.0px,#fff600 193.7px,#fff600 340.4px,#ffaf00 345.2px,#ff9100 350.0px,#ff9100 354.0px)"></div><div class="a" style="left:-4px;top:67px;width:354px;height:1px;background:linear-gradient(90deg,#ffa500 0.0px,#ffa500 4.0px,#ffbe00 9.3px,#fff800 14.6px,#fff800 43.0px,#ffe200 43.6px,#fff800 44.2px,#fff800 160.6px,#ffad00 164.6px,#ff8500 169.1px,#fa6b00 173.8px,#fa6b00 179.8px,#ff8500 186.5px,#ffad00 191.0px,#fff800 195.6px,#fff800 339.4px,#ffb000 344.7px,#ff9100 350.0px,#ff9100 354.0px)"></div><div class="a" style="left:-4px;top:68px;width:354px;height:1px;background:linear-gradient(90deg,#ffa400 0.0px,#ffa400 4.0px,#ffbc00 10.4px,#fff600 16.8px,#fff600 43.0px,#ffe100 43.6px,#fff600 44.2px,#fff600 158.4px,#ffab00 163.4px,#ff8200 167.9px,#fa6800 172.8px,#fa6800 178.8px,#ff8200 185.7px,#ffab00 190.2px,#fff600 194.9px,#fff600 340.0px,#ffaf00 345.0px,#ff9100 350.0px,#ff9100 354.0px)"></div><div class="a" style="left:-4px;top:69px;width:354px;height:1px;background:linear-gradient(90deg,#ff9a00 0.0px,#ff9a00 4.0px,#ffb600 10.4px,#fff700 16.8px,#fff700 43.0px,#ffe200 43.6px,#fff700 44.2px,#fff700 160.5px,#ffa700 164.5px,#ff7c00 169.0px,#f96200 173.5px,#f96200 179.5px,#ff7c00 185.9px,#ffa700 190.4px,#fff700 196.2px,#fff700 339.6px,#ffb000 344.8px,#ff9100 350.0px,#ff9100 354.0px)"></div><div class="a" style="left:-4px;top:70px;width:354px;height:1px;background:linear-gradient(90deg,#ff9a00 0.0px,#ff9a00 4.0px,#ffb500 9.5px,#fff400 14.9px,#fff400 43.0px,#ffe100 43.6px,#fff400 44.2px,#fff400 160.3px,#ffb000 164.3px,#ff8c00 168.8px,#fb7200 174.1px,#fb7200 180.1px,#ff8c00 187.3px,#ffb000 191.8px,#fff400 196.0px,#fff400 338.3px,#ffaf00 344.1px,#ff9100 350.0px,#ff9100 354.0px)"></div><div class="a" style="left:-4px;top:71px;width:354px;height:1px;background:linear-gradient(90deg,#ff8e00 0.0px,#ff8e00 4.0px,#ffae00 7.7px,#fff800 11.3px,#fff800 43.0px,#ffe200 43.6px,#fff800 44.2px,#fff800 160.7px,#ffa500 164.7px,#ff7900 169.2px,#f85f00 174.5px,#f85f00 180.5px,#ff7900 187.8px,#ffa500 192.3px,#fff800 196.6px,#fff800 337.3px,#ffb000 343.6px,#ff9100 350.0px,#ff9100 354.0px)"></div><div class="a" style="left:-4px;top:72px;width:354px;height:1px;background:linear-gradient(90deg,#ff9200 0.0px,#ff9200 4.0px,#ffb000 7.5px,#fff700 10.9px,#fff700 43.0px,#ffe200 43.6px,#fff700 44.2px,#fff700 160.3px,#ffb400 165.1px,#ff9000 169.6px,#fc7600 174.2px,#fc7600 180.2px,#ff9000 186.9px,#ffb400 191.4px,#fff700 197.3px,#fff700 337.6px,#ffb000 343.8px,#ff9100 350.0px,#ff9100 354.0px)"></div><div class="a" style="left:-4px;top:73px;width:354px;height:1px;background:linear-gradient(90deg,#ff9f00 0.0px,#ff9f00 4.0px,#ffb900 8.4px,#fff600 12.7px,#fff600 43.0px,#ffe200 43.6px,#fff600 44.2px,#fff600 161.1px,#ffac00 165.1px,#ff8400 169.6px,#fa6a00 174.6px,#fa6a00 180.6px,#ff8400 187.7px,#ffac00 192.2px,#fff600 197.5px,#fff600 336.7px,#ffaf00 343.4px,#ff9100 350.0px,#ff9100 354.0px)"></div><div class="a" style="left:-4px;top:74px;width:354px;height:1px;background:linear-gradient(90deg,#ffa400 0.0px,#ffa400 4.0px,#ffbd00 9.7px,#fff800 15.4px,#fff800 43.0px,#ffe300 43.6px,#fff800 44.2px,#fff800 161.9px,#ffaf00 165.9px,#ff8800 170.4px,#fb6e00 174.8px,#fb6e00 180.8px,#ff8800 187.2px,#ffaf00 191.7px,#fff800 197.3px,#fff800 338.9px,#ffb000 344.4px,#ff9100 350.0px,#ff9100 354.0px)"></div><div class="a" style="left:-4px;top:75px;width:354px;height:1px;background:linear-gradient(90deg,#ffa000 0.0px,#ffa000 4.0px,#ffba00 8.0px,#fff600 11.9px,#fff600 43.0px,#ffe200 43.6px,#fff600 44.2px,#fff600 161.4px,#ffa600 166.4px,#ff7c00 170.9px,#f96200 174.5px,#f96200 180.5px,#ff7c00 186.1px,#ffa600 190.6px,#fff600 195.1px,#fff600 336.2px,#ffaf00 343.1px,#ff9100 350.0px,#ff9100 354.0px)"></div><div class="a" style="left:-4px;top:76px;width:354px;height:1px;background:linear-gradient(90deg,#ff8f00 0.0px,#ff8f00 4.0px,#ffad00 7.8px,#fff400 11.6px,#fff400 43.0px,#ffe100 43.6px,#fff400 44.2px,#fff400 160.5px,#ffa600 165.6px,#ff7c00 170.1px,#f96200 174.5px,#f96200 180.5px,#ff7c00 186.8px,#ffa600 191.3px,#fff400 196.5px,#fff400 336.5px,#ffaf00 343.2px,#ff9100 350.0px,#ff9100 354.0px)"></div><div class="a" style="left:-4px;top:77px;width:354px;height:1px;background:linear-gradient(90deg,#ff9100 0.0px,#ff9100 4.0px,#ffaf00 7.1px,#fff400 10.2px,#fff400 43.0px,#ffe100 43.6px,#fff400 44.2px,#fff400 160.0px,#ffb200 164.0px,#ff8e00 168.5px,#fc7400 173.0px,#fc7400 179.0px,#ff8e00 185.4px,#ffb200 189.9px,#fff400 194.4px,#fff400 340.1px,#ffaf00 345.0px,#ff9100 350.0px,#ff9100 354.0px)"></div><div class="a" style="left:-4px;top:78px;width:354px;height:1px;background:linear-gradient(90deg,#ffa000 0.0px,#ffa000 4.0px,#ffba00 7.0px,#fff500 10.0px,#fff500 43.0px,#ffe100 43.6px,#fff500 44.2px,#fff500 159.5px,#ffb400 163.5px,#ff9100 168.0px,#fc7700 172.9px,#fc7700 178.9px,#ff9100 185.7px,#ffb400 190.2px,#fff500 194.8px,#fff500 336.6px,#ffaf00 343.3px,#ff9100 350.0px,#ff9100 354.0px)"></div><div class="a" style="left:-4px;top:79px;width:354px;height:1px;background:linear-gradient(90deg,#ff9b00 0.0px,#ff9b00 4.0px,#ffb700 7.5px,#fff900 11.1px,#fff900 43.0px,#ffe300 43.6px,#fff900 44.2px,#fff900 158.9px,#ffa900 165.2px,#ff7d00 169.7px,#f96300 173.7px,#f96300 179.7px,#ff7d00 185.7px,#ffa900 190.2px,#fff900 195.8px,#fff900 339.1px,#ffb000 344.5px,#ff9100 350.0px,#ff9100 354.0px)"></div><div class="a" style="left:-4px;top:80px;width:354px;height:1px;background:linear-gradient(90deg,#ff9300 0.0px,#ff9300 4.0px,#ffb100 8.3px,#fff700 12.6px,#fff700 43.0px,#ffe200 43.6px,#fff700 44.2px,#fff700 161.0px,#ffa800 166.2px,#ff7e00 170.7px,#f96400 174.4px,#f96400 180.4px,#ff7e00 186.2px,#ffa800 190.7px,#fff700 195.5px,#fff700 337.0px,#ffaf00 343.5px,#ff9100 350.0px,#ff9100 354.0px)"></div><div class="a" style="left:-4px;top:81px;width:354px;height:1px;background:linear-gradient(90deg,#ff9000 0.0px,#ff9000 4.0px,#ffaf00 8.9px,#fff800 13.9px,#fff800 43.0px,#ffe200 43.6px,#fff800 44.2px,#fff800 160.2px,#ffa900 164.2px,#ff7f00 168.7px,#f96500 173.0px,#f96500 179.0px,#ff7f00 185.4px,#ffa900 189.9px,#fff800 194.9px,#fff800 337.8px,#ffb000 343.9px,#ff9100 350.0px,#ff9100 354.0px)"></div><div class="a" style="left:-4px;top:82px;width:354px;height:1px;background:linear-gradient(90deg,#ff9b00 0.0px,#ff9b00 4.0px,#ffb700 8.0px,#fff900 12.1px,#fff900 43.0px,#ffe300 43.6px,#fff900 44.2px,#fff900 159.2px,#ffa400 163.2px,#ff7600 167.7px,#f85c00 173.1px,#f85c00 179.1px,#ff7600 186.5px,#ffa400 191.0px,#fff900 196.7px,#fff900 336.9px,#ffb000 343.4px,#ff9100 350.0px,#ff9100 354.0px)"></div><div class="a" style="left:-4px;top:83px;width:354px;height:1px;background:linear-gradient(90deg,#ff9f00 0.0px,#ff9f00 4.0px,#ffb800 7.7px,#fff400 11.4px,#fff400 43.0px,#ffe100 43.6px,#fff400 44.2px,#fff400 158.6px,#ffac00 162.6px,#ff8600 167.1px,#fa6c00 172.6px,#fa6c00 178.6px,#ff8600 186.0px,#ffac00 190.5px,#fff400 195.7px,#fff400 336.7px,#ffaf00 343.4px,#ff9100 350.0px,#ff9100 354.0px)"></div><div class="a" style="left:-4px;top:84px;width:354px;height:1px;background:linear-gradient(90deg,#ff9700 0.0px,#ff9700 4.0px,#ffb300 9.3px,#fff600 14.6px,#fff600 43.0px,#ffe100 43.6px,#fff600 44.2px,#fff600 159.4px,#ffb500 164.7px,#ff9200 169.2px,#fc7800 172.9px,#fc7800 178.9px,#ff9200 184.6px,#ffb500 189.1px,#fff600 194.1px,#fff600 340.2px,#ffaf00 345.1px,#ff9100 350.0px,#ff9100 354.0px)"></div><div class="a" style="left:-4px;top:85px;width:354px;height:1px;background:linear-gradient(90deg,#ff9400 0.0px,#ff9400 4.0px,#ffb200 8.3px,#fff800 12.7px,#fff800 43.0px,#ffe300 43.6px,#fff800 44.2px,#fff800 159.3px,#ffae00 163.3px,#ff8600 167.8px,#fa6c00 172.2px,#fa6c00 178.2px,#ff8600 184.5px,#ffae00 189.0px,#fff800 193.7px,#fff800 337.6px,#ffb000 343.8px,#ff9100 350.0px,#ff9100 354.0px)"></div><div class="a" style="left:-4px;top:86px;width:354px;height:1px;background:linear-gradient(90deg,#ff9800 0.0px,#ff9800 4.0px,#ffb400 8.2px,#fff500 12.5px,#fff500 43.0px,#ffe100 43.6px,#fff500 44.2px,#fff500 160.4px,#ffb100 165.3px,#ff8c00 169.8px,#fb7200 174.0px,#fb7200 180.0px,#ff8c00 186.2px,#ffb100 190.7px,#fff500 196.1px,#fff500 339.8px,#ffaf00 344.9px,#ff9100 350.0px,#ff9100 354.0px)"></div><div class="a" style="left:-4px;top:87px;width:354px;height:1px;background:linear-gradient(90deg,#ff8c00 0.0px,#ff8c00 4.0px,#ffac00 8.4px,#fff700 12.8px,#fff700 43.0px,#ffe200 43.6px,#fff700 44.2px,#fff700 162.4px,#ffa800 166.4px,#ff7d00 170.9px,#f96300 174.9px,#f96300 180.9px,#ff7d00 187.0px,#ffa800 191.5px,#fff700 196.0px,#fff700 339.1px,#ffb000 344.6px,#ff9100 350.0px,#ff9100 354.0px)"></div><div class="a" style="left:-4px;top:88px;width:354px;height:1px;background:linear-gradient(90deg,#ff9500 0.0px,#ff9500 4.0px,#ffb200 7.9px,#fff700 11.9px,#fff700 43.0px,#ffe200 43.6px,#fff700 44.2px,#fff700 159.4px,#ffa900 165.2px,#ff7f00 169.7px,#f96500 174.3px,#f96500 180.3px,#ff7f00 186.9px,#ffa900 191.4px,#fff700 196.1px,#fff700 336.3px,#ffb000 343.1px,#ff9100 350.0px,#ff9100 354.0px)"></div><div class="a" style="left:-4px;top:89px;width:354px;height:1px;background:linear-gradient(90deg,#ff9500 0.0px,#ff9500 4.0px,#ffb200 9.2px,#fff700 14.3px,#fff700 43.0px,#ffe200 43.6px,#fff700 44.2px,#fff700 160.3px,#ffa600 165.9px,#ff7b00 170.4px,#f96100 173.7px,#f96100 179.7px,#ff7b00 185.0px,#ffa600 189.5px,#fff700 194.9px,#fff700 340.1px,#ffb000 345.1px,#ff9100 350.0px,#ff9100 354.0px)"></div><div class="a" style="left:-4px;top:90px;width:354px;height:1px;background:linear-gradient(90deg,#ff9c00 0.0px,#ff9c00 4.0px,#ffb700 10.0px,#fff600 16.1px,#fff600 43.0px,#ffe200 43.6px,#fff600 44.2px,#fff600 159.1px,#ffce00 164.1px,#ffb900 168.6px,#fda200 172.5px,#fda200 178.5px,#ffb900 184.5px,#ffce00 189.0px,#fff600 193.1px,#fff600 336.4px,#ffaf00 343.2px,#ff9100 350.0px,#ff9100 354.0px)"></div><div class="a" style="left:-4px;top:91px;width:354px;height:1px;background:linear-gradient(90deg,#ff9d00 0.0px,#ff9d00 4.0px,#ffb800 9.3px,#fff600 14.6px,#fff600 43.0px,#ffe200 43.6px,#fff600 44.2px,#fff600 160.2px,#ffd100 165.2px,#ffbd00 169.7px,#fda500 173.9px,#fda500 179.9px,#ffbd00 186.2px,#ffd100 190.7px,#fff600 194.7px,#fff600 339.0px,#ffaf00 344.5px,#ff9100 350.0px,#ff9100 354.0px)"></div><div class="a" style="left:-4px;top:92px;width:354px;height:1px;background:linear-gradient(90deg,#ffa100 0.0px,#ffa100 4.0px,#ffbb00 10.6px,#fff700 17.1px,#fff700 43.0px,#ffe200 43.6px,#fff700 44.2px,#fff700 160.7px,#ffce00 165.5px,#ffb700 170.0px,#fca000 174.1px,#fca000 180.1px,#ffb700 186.3px,#ffce00 190.8px,#fff700 196.1px,#fff700 340.5px,#ffb000 345.2px,#ff9100 350.0px,#ff9100 354.0px)"></div><div class="a" style="left:-4px;top:93px;width:354px;height:1px;background:linear-gradient(90deg,#ffa100 0.0px,#ffa100 4.0px,#ffba00 9.5px,#fff600 15.0px,#fff600 43.0px,#ffe100 43.6px,#fff600 44.2px,#fff600 162.1px,#ffa600 166.1px,#ff7b00 170.6px,#f96100 174.5px,#f96100 180.5px,#ff7b00 186.4px,#ffa600 190.9px,#fff600 196.7px,#fff600 338.3px,#ffaf00 344.1px,#ff9100 350.0px,#ff9100 354.0px)"></div><div class="a" style="left:-4px;top:94px;width:354px;height:1px;background:linear-gradient(90deg,#ff9000 0.0px,#ff9000 4.0px,#ffae00 9.1px,#fff600 14.1px,#fff600 43.0px,#ffe100 43.6px,#fff600 44.2px,#fff600 162.2px,#ffae00 166.2px,#ff8700 170.7px,#fb6d00 175.2px,#fb6d00 181.2px,#ff8700 187.7px,#ffae00 192.2px,#fff600 197.8px,#fff600 340.0px,#ffaf00 345.0px,#ff9100 350.0px,#ff9100 354.0px)"></div><div class="a" style="left:-4px;top:95px;width:354px;height:1px;background:linear-gradient(90deg,#ff9100 0.0px,#ff9100 4.0px,#ffb000 9.3px,#fff900 14.6px,#fff900 43.0px,#ffe300 43.6px,#fff900 44.2px,#fff900 160.3px,#ffb000 164.3px,#ff8900 168.8px,#fb6f00 173.3px,#fb6f00 179.3px,#ff8900 185.9px,#ffb000 190.4px,#fff900 195.0px,#fff900 336.4px,#ffb000 343.2px,#ff9100 350.0px,#ff9100 354.0px)"></div><div class="a" style="left:-4px;top:96px;width:354px;height:1px;background:linear-gradient(90deg,#ff8f00 0.0px,#ff8f00 4.0px,#ffae00 8.8px,#fff600 13.7px,#fff600 43.0px,#ffe100 43.6px,#fff600 44.2px,#fff600 162.1px,#ffb600 166.1px,#ff9400 170.6px,#fc7a00 173.6px,#fc7a00 179.6px,#ff9400 184.6px,#ffb600 189.1px,#fff600 194.2px,#fff600 338.2px,#ffaf00 344.1px,#ff9100 350.0px,#ff9100 354.0px)"></div><div class="a" style="left:-4px;top:97px;width:354px;height:1px;background:linear-gradient(90deg,#ffa600 0.0px,#ffa600 4.0px,#ffbe00 10.1px,#fff500 16.3px,#fff500 43.0px,#ffe100 43.6px,#fff500 44.2px,#fff500 162.5px,#ffa500 166.5px,#ff7a00 171.0px,#f96000 174.3px,#f96000 180.3px,#ff7a00 185.5px,#ffa500 190.0px,#fff500 194.6px,#fff500 336.5px,#ffaf00 343.3px,#ff9100 350.0px,#ff9100 354.0px)"></div><div class="a" style="left:-4px;top:98px;width:354px;height:1px;background:linear-gradient(90deg,#ffa200 0.0px,#ffa200 4.0px,#ffbb00 9.5px,#fff500 15.1px,#fff500 43.0px,#ffe100 43.6px,#fff500 44.2px,#fff500 160.4px,#ffa400 164.9px,#ff7900 169.4px,#f85f00 173.6px,#f85f00 179.6px,#ff7900 185.8px,#ffa400 190.3px,#fff500 196.3px,#fff500 336.3px,#ffaf00 343.2px,#ff9100 350.0px,#ff9100 354.0px)"></div><div class="a" style="left:-4px;top:99px;width:354px;height:1px;background:linear-gradient(90deg,#ff9e00 0.0px,#ff9e00 4.0px,#ffb900 8.4px,#fff700 12.9px,#fff700 43.0px,#ffe200 43.6px,#fff700 44.2px,#fff700 161.7px,#ffb000 165.7px,#ff8a00 170.2px,#fb7000 173.8px,#fb7000 179.8px,#ff8a00 185.4px,#ffb000 189.9px,#fff700 193.9px,#fff700 340.0px,#ffb000 345.0px,#ff9100 350.0px,#ff9100 354.0px)"></div><div class="a" style="left:-4px;top:100px;width:354px;height:1px;background:linear-gradient(90deg,#ff9600 0.0px,#ff9600 4.0px,#ffb300 7.4px,#fff600 10.9px,#fff600 43.0px,#ffe200 43.6px,#fff600 44.2px,#fff600 160.3px,#ffae00 165.7px,#ff8700 170.2px,#fb6d00 173.3px,#fb6d00 179.3px,#ff8700 184.5px,#ffae00 189.0px,#fff600 193.7px,#fff600 337.8px,#ffaf00 343.9px,#ff9100 350.0px,#ff9100 354.0px)"></div><div class="a" style="left:-4px;top:101px;width:354px;height:1px;background:linear-gradient(90deg,#ff9000 0.0px,#ff9000 4.0px,#ffae00 8.8px,#fff400 13.6px,#fff400 43.0px,#ffe100 43.6px,#fff400 44.2px,#fff400 162.8px,#ffac00 166.8px,#ff8600 171.3px,#fa6c00 174.4px,#fa6c00 180.4px,#ff8600 185.5px,#ffac00 190.0px,#fff400 195.2px,#fff400 337.6px,#ffaf00 343.8px,#ff9100 350.0px,#ff9100 354.0px)"></div><div class="a" style="left:-4px;top:102px;width:354px;height:1px;background:linear-gradient(90deg,#ff9900 0.0px,#ff9900 4.0px,#ffb600 9.6px,#fff800 15.2px,#fff800 43.0px,#ffe200 43.6px,#fff800 44.2px,#fff800 163.6px,#ffb600 167.6px,#ff9300 172.1px,#fc7900 175.4px,#fc7900 181.4px,#ff9300 186.7px,#ffb600 191.2px,#fff800 196.1px,#fff800 338.2px,#ffb000 344.1px,#ff9100 350.0px,#ff9100 354.0px)"></div><div class="a" style="left:-4px;top:103px;width:354px;height:1px;background:linear-gradient(90deg,#ff9a00 0.0px,#ff9a00 4.0px,#ffb700 9.2px,#fff900 14.3px,#fff900 43.0px,#ffe300 43.6px,#fff900 44.2px,#fff900 160.5px,#ffab00 166.2px,#ff8100 170.7px,#fa6700 175.1px,#fa6700 181.1px,#ff8100 187.5px,#ffab00 192.0px,#fff900 197.8px,#fff900 337.3px,#ffb000 343.7px,#ff9100 350.0px,#ff9100 354.0px)"></div><div class="a" style="left:-4px;top:104px;width:354px;height:1px;background:linear-gradient(90deg,#ff9400 0.0px,#ff9400 4.0px,#ffb200 9.8px,#fff700 15.5px,#fff700 43.0px,#ffe200 43.6px,#fff700 44.2px,#fff700 162.1px,#ffa600 166.1px,#ff7a00 170.6px,#f96000 173.9px,#f96000 179.9px,#ff7a00 185.2px,#ffa600 189.7px,#fff700 194.8px,#fff700 339.0px,#ffb000 344.5px,#ff9100 350.0px,#ff9100 354.0px)"></div><div class="a" style="left:-4px;top:105px;width:354px;height:1px;background:linear-gradient(90deg,#ff9a00 0.0px,#ff9a00 4.0px,#ffb500 9.8px,#fff400 15.6px,#fff400 43.0px,#ffe100 43.6px,#fff400 44.2px,#fff400 160.8px,#ffab00 165.0px,#ff8300 169.5px,#fa6900 173.2px,#fa6900 179.2px,#ff8300 184.9px,#ffab00 189.4px,#fff400 195.2px,#fff400 336.2px,#ffaf00 343.1px,#ff9100 350.0px,#ff9100 354.0px)"></div><div class="a" style="left:-4px;top:106px;width:354px;height:1px;background:linear-gradient(90deg,#ff9700 0.0px,#ff9700 4.0px,#ffb400 10.4px,#fff700 16.8px,#fff700 43.0px,#ffe200 43.6px,#fff700 44.2px,#fff700 162.2px,#ffb400 166.2px,#ff8f00 170.7px,#fc7500 173.5px,#fc7500 179.5px,#ff8f00 184.4px,#ffb400 188.9px,#fff700 194.7px,#fff700 340.5px,#ffb000 345.3px,#ff9100 350.0px,#ff9100 354.0px)"></div><div class="a" style="left:-4px;top:107px;width:354px;height:1px;background:linear-gradient(90deg,#ff9b00 0.0px,#ff9b00 4.0px,#ffb700 8.2px,#fff800 12.3px,#fff800 43.0px,#ffe200 43.6px,#fff800 44.2px,#fff800 162.4px,#ffa900 167.2px,#ff7e00 171.7px,#f96400 173.6px,#f96400 179.6px,#ff7e00 183.4px,#ffa900 187.9px,#fff800 192.1px,#fff800 336.5px,#ffb000 343.3px,#ff9100 350.0px,#ff9100 354.0px)"></div><div class="a" style="left:-4px;top:108px;width:354px;height:1px;background:linear-gradient(90deg,#ff9600 0.0px,#ff9600 4.0px,#ffb300 8.2px,#fff800 12.3px,#fff800 43.0px,#ffe300 43.6px,#fff800 44.2px,#fff800 162.7px,#ffa400 166.7px,#ff7700 171.2px,#f85d00 173.1px,#f85d00 179.1px,#ff7700 183.1px,#ffa400 187.6px,#fff800 192.2px,#fff800 338.5px,#ffb000 344.3px,#ff9100 350.0px,#ff9100 354.0px)"></div><div class="a" style="left:-4px;top:109px;width:354px;height:1px;background:linear-gradient(90deg,#ff9900 0.0px,#ff9900 4.0px,#ffb600 10.1px,#fff900 16.2px,#fff900 43.0px,#ffe300 43.6px,#fff900 44.2px,#fff900 161.3px,#ffb800 165.3px,#ff9500 169.8px,#fd7b00 172.7px,#fd7b00 178.7px,#ff9500 183.7px,#ffb800 188.2px,#fff900 192.6px,#fff900 336.8px,#ffb000 343.4px,#ff9100 350.0px,#ff9100 354.0px)"></div><div class="a" style="left:-4px;top:110px;width:354px;height:1px;background:linear-gradient(90deg,#ff9100 0.0px,#ff9100 4.0px,#ffaf00 9.2px,#fff600 14.4px,#fff600 43.0px,#ffe100 43.6px,#fff600 44.2px,#fff600 162.6px,#ffa700 166.6px,#ff7d00 171.1px,#f96300 174.7px,#f96300 180.7px,#ff7d00 186.3px,#ffa700 190.8px,#fff600 195.2px,#fff600 336.6px,#ffaf00 343.3px,#ff9100 350.0px,#ff9100 354.0px)"></div><div class="a" style="left:-4px;top:111px;width:354px;height:1px;background:linear-gradient(90deg,#ff9f00 0.0px,#ff9f00 4.0px,#ffb900 7.6px,#fff400 11.3px,#fff400 43.0px,#ffe100 43.6px,#fff400 44.2px,#fff400 161.6px,#ffb500 165.6px,#ff9300 170.1px,#fc7900 174.7px,#fc7900 180.7px,#ff9300 187.2px,#ffb500 191.7px,#fff400 196.0px,#fff400 337.5px,#ffaf00 343.8px,#ff9100 350.0px,#ff9100 354.0px)"></div><div class="a" style="left:-4px;top:112px;width:354px;height:1px;background:linear-gradient(90deg,#ff8e00 0.0px,#ff8e00 4.0px,#ffae00 8.1px,#fff900 12.2px,#fff900 43.0px,#ffe300 43.6px,#fff900 44.2px,#fff900 160.4px,#ffb300 164.9px,#ff8e00 169.4px,#fb7400 173.6px,#fb7400 179.6px,#ff8e00 185.8px,#ffb300 190.3px,#fff900 194.7px,#fff900 337.7px,#ffb000 343.8px,#ff9100 350.0px,#ff9100 354.0px)"></div><div class="a" style="left:-4px;top:113px;width:354px;height:1px;background:linear-gradient(90deg,#ff9e00 0.0px,#ff9e00 4.0px,#ffb900 8.1px,#fff800 12.2px,#fff800 43.0px,#ffe200 43.6px,#fff800 44.2px,#fff800 160.3px,#ffa800 166.5px,#ff7e00 171.0px,#f96400 174.5px,#f96400 180.5px,#ff7e00 186.0px,#ffa800 190.5px,#fff800 195.8px,#fff800 339.6px,#ffb000 344.8px,#ff9100 350.0px,#ff9100 354.0px)"></div><div class="a" style="left:-4px;top:114px;width:354px;height:1px;background:linear-gradient(90deg,#ffa600 0.0px,#ffa600 4.0px,#ffbf00 7.1px,#fff700 10.3px,#fff700 43.0px,#ffe200 43.6px,#fff700 44.2px,#fff700 160.6px,#ffaf00 166.0px,#ff8800 170.5px,#fb6e00 174.2px,#fb6e00 180.2px,#ff8800 185.8px,#ffaf00 190.3px,#fff700 194.9px,#fff700 339.7px,#ffb000 344.9px,#ff9100 350.0px,#ff9100 354.0px)"></div><div class="a" style="left:-4px;top:115px;width:354px;height:1px;background:linear-gradient(90deg,#ff9400 0.0px,#ff9400 4.0px,#ffb200 6.7px,#fff800 9.5px,#fff800 43.0px,#ffe300 43.6px,#fff800 44.2px,#fff800 162.8px,#ffaa00 166.8px,#ff7f00 171.3px,#f96500 174.0px,#f96500 180.0px,#ff7f00 184.8px,#ffaa00 189.3px,#fff800 193.7px,#fff800 336.5px,#ffb000 343.3px,#ff9100 350.0px,#ff9100 354.0px)"></div><div class="a" style="left:-4px;top:116px;width:354px;height:1px;background:linear-gradient(90deg,#ff9900 0.0px,#ff9900 4.0px,#ffb500 6.4px,#fff900 8.8px,#fff900 43.0px,#ffe300 43.6px,#fff900 44.2px,#fff900 163.1px,#ffb800 167.1px,#ff9500 171.6px,#fd7b00 174.2px,#fd7b00 180.2px,#ff9500 184.8px,#ffb800 189.3px,#fff900 193.6px,#fff900 338.2px,#ffb000 344.1px,#ff9100 350.0px,#ff9100 354.0px)"></div><div class="a" style="left:-4px;top:117px;width:354px;height:1px;background:linear-gradient(90deg,#ff9e00 0.0px,#ff9e00 4.0px,#ffb900 7.3px,#fff700 10.7px,#fff700 43.0px,#ffe200 43.6px,#fff700 44.2px,#fff700 163.4px,#ffae00 167.4px,#ff8700 171.9px,#fa6d00 174.5px,#fa6d00 180.5px,#ff8700 185.1px,#ffae00 189.6px,#fff700 195.0px,#fff700 338.4px,#ffb000 344.2px,#ff9100 350.0px,#ff9100 354.0px)"></div><div class="a" style="left:-4px;top:118px;width:354px;height:1px;background:linear-gradient(90deg,#ffa100 0.0px,#ffa100 4.0px,#ffbb00 7.1px,#fff900 10.2px,#fff900 43.0px,#ffe300 43.6px,#fff900 44.2px,#fff900 161.8px,#ffa900 165.8px,#ff7e00 170.3px,#f96400 173.9px,#f96400 179.9px,#ff7e00 185.6px,#ffa900 190.1px,#fff900 195.7px,#fff900 337.1px,#ffb000 343.5px,#ff9100 350.0px,#ff9100 354.0px)"></div><div class="a" style="left:-4px;top:119px;width:354px;height:1px;background:linear-gradient(90deg,#ff9900 0.0px,#ff9900 4.0px,#ffb600 7.2px,#fff800 10.4px,#fff800 43.0px,#ffe200 43.6px,#fff800 44.2px,#fff800 159.7px,#ffae00 165.1px,#ff8700 169.6px,#fa6d00 173.7px,#fa6d00 179.7px,#ff8700 185.7px,#ffae00 190.2px,#fff800 195.7px,#fff800 338.1px,#ffb000 344.1px,#ff9100 350.0px,#ff9100 354.0px)"></div><div class="a" style="left:-4px;top:120px;width:354px;height:1px;background:linear-gradient(90deg,#ff9000 0.0px,#ff9000 4.0px,#ffaf00 7.1px,#fff800 10.2px,#fff800 43.0px,#ffe300 43.6px,#fff800 44.2px,#fff800 160.2px,#ffad00 164.2px,#ff8500 168.7px,#fa6b00 173.1px,#fa6b00 179.1px,#ff8500 185.5px,#ffad00 190.0px,#fff800 194.6px,#fff800 337.0px,#ffb000 343.5px,#ff9100 350.0px,#ff9100 354.0px)"></div><div class="a" style="left:-4px;top:121px;width:354px;height:1px;background:linear-gradient(90deg,#ff9b00 0.0px,#ff9b00 4.0px,#ffb600 9.4px,#fff400 14.9px,#fff400 43.0px,#ffe100 43.6px,#fff400 44.2px,#fff400 160.6px,#ffa700 165.4px,#ff7e00 169.9px,#f96400 174.1px,#f96400 180.1px,#ff7e00 186.4px,#ffa700 190.9px,#fff400 194.9px,#fff400 339.4px,#ffaf00 344.7px,#ff9100 350.0px,#ff9100 354.0px)"></div><div class="a" style="left:-4px;top:122px;width:354px;height:1px;background:linear-gradient(90deg,#ff9300 0.0px,#ff9300 4.0px,#ffb100 9.1px,#fff700 14.2px,#fff700 43.0px,#ffe200 43.6px,#fff700 44.2px,#fff700 161.5px,#ffb500 166.1px,#ff9200 170.6px,#fc7800 173.5px,#fc7800 179.5px,#ff9200 184.5px,#ffb500 189.0px,#fff700 193.3px,#fff700 337.5px,#ffb000 343.8px,#ff9100 350.0px,#ff9100 354.0px)"></div><div class="a" style="left:-4px;top:123px;width:354px;height:1px;background:linear-gradient(90deg,#ff8e00 0.0px,#ff8e00 4.0px,#ffae00 9.8px,#fff800 15.7px,#fff800 43.0px,#ffe300 43.6px,#fff800 44.2px,#fff800 162.0px,#ffa800 166.0px,#ff7d00 170.5px,#f96300 173.4px,#f96300 179.4px,#ff7d00 184.4px,#ffa800 188.9px,#fff800 193.0px,#fff800 338.6px,#ffb000 344.3px,#ff9100 350.0px,#ff9100 354.0px)"></div><div class="a" style="left:-4px;top:124px;width:354px;height:1px;background:linear-gradient(90deg,#ff9000 0.0px,#ff9000 4.0px,#feaf00 10.8px,#fcf600 17.6px,#fcf600 43.0px,#fee200 43.6px,#fcf600 44.2px,#fcf600 159.9px,#fea400 166.0px,#ff7700 170.5px,#f85d00 174.1px,#f85d00 180.1px,#ff7700 185.6px,#fea400 190.1px,#fcf600 194.4px,#fcf600 339.0px,#feaf00 344.5px,#ff9100 350.0px,#ff9100 354.0px)"></div><div class="a" style="left:-4px;top:125px;width:354px;height:1px;background:linear-gradient(90deg,#ff8e00 0.0px,#ff8e00 4.0px,#fdac00 9.3px,#faf200 14.6px,#faf200 43.0px,#fce000 43.6px,#faf200 44.2px,#faf200 160.8px,#fdb200 164.8px,#ff9000 169.3px,#fc7600 174.2px,#fc7600 180.2px,#ff9000 187.0px,#fdb200 191.5px,#faf200 196.0px,#faf200 339.7px,#fdae00 344.9px,#ff9100 350.0px,#ff9100 354.0px)"></div><div class="a" style="left:-4px;top:126px;width:354px;height:1px;background:linear-gradient(90deg,#fe9800 0.0px,#fe9800 4.0px,#fcb300 8.1px,#f7f200 12.2px,#f7f200 43.0px,#fbe000 43.6px,#f7f200 44.2px,#f7f200 163.0px,#fca900 167.0px,#ff8100 171.5px,#fa6700 174.6px,#fa6700 180.6px,#ff8100 185.6px,#fca900 190.1px,#f7f200 195.4px,#f7f200 340.8px,#fdae00 345.4px,#ff9100 350.0px,#ff9100 354.0px)"></div><div class="a" style="left:-4px;top:127px;width:354px;height:1px;background:linear-gradient(90deg,#fbaf00 0.0px,#fbaf00 4.0px,#f9c300 9.0px,#f4f000 14.0px,#f4f000 161.4px,#fbb000 165.4px,#ff8d00 169.9px,#fb7300 173.4px,#fb7300 179.4px,#ff8d00 184.9px,#fbb000 189.4px,#f4f000 194.6px,#f4f000 338.5px,#fbbb00 344.2px,#fea400 350.0px,#fea400 354.0px)"></div><div class="a" style="left:-4px;top:128px;width:354px;height:1px;background:linear-gradient(90deg,#faaf00 0.0px,#faaf00 4.0px,#f8c200 8.5px,#f2ef00 13.0px,#f2ef00 162.2px,#fab100 167.0px,#ff9000 171.5px,#fc7600 174.1px,#fc7600 180.1px,#ff9000 184.6px,#fab100 189.1px,#f2ef00 193.5px,#f2ef00 339.8px,#fbba00 344.9px,#fea400 350.0px,#fea400 354.0px)"></div><div class="a" style="left:-4px;top:129px;width:354px;height:1px;background:linear-gradient(90deg,#f9ae00 0.0px,#f9ae00 4.0px,#f6c000 7.7px,#efec00 11.3px,#efec00 162.0px,#f9a600 166.0px,#ff8000 170.5px,#fa6600 173.6px,#fa6600 179.6px,#ff8000 184.7px,#f9a600 189.2px,#efec00 195.2px,#efec00 339.3px,#fab900 344.6px,#fea400 350.0px,#fea400 354.0px)"></div><div class="a" style="left:-4px;top:130px;width:354px;height:1px;background:linear-gradient(90deg,#f9ae00 0.0px,#f9ae00 4.0px,#f5c100 7.3px,#edee00 10.7px,#edee00 161.3px,#f9af00 166.0px,#ff8d00 170.5px,#fb7300 173.0px,#fb7300 179.0px,#ff8d00 183.5px,#f9af00 188.0px,#edee00 192.0px,#edee00 341.3px,#f9ba00 345.6px,#fea400 350.0px,#fea400 354.0px)"></div><div class="a" style="left:-4px;top:131px;width:354px;height:1px;background:linear-gradient(90deg,#f8ad00 0.0px,#f8ad00 4.0px,#f4bf00 7.8px,#eae900 11.7px,#eae900 163.3px,#f8a400 167.6px,#ff7f00 172.1px,#f96500 174.5px,#f96500 180.5px,#ff7f00 184.9px,#f8a400 189.4px,#eae900 195.3px,#eae900 340.6px,#f8b900 345.3px,#fea400 350.0px,#fea400 354.0px)"></div><div class="a" style="left:-4px;top:132px;width:354px;height:1px;background:linear-gradient(90deg,#f8ae00 0.0px,#f8ae00 4.0px,#f4c000 9.1px,#eaec00 14.2px,#eaec00 164.2px,#f8a600 168.4px,#ff8100 172.9px,#fa6700 174.2px,#fa6700 180.2px,#ff8100 183.4px,#f8a600 187.9px,#eaec00 193.7px,#eaec00 340.7px,#f8b900 345.3px,#fea400 350.0px,#fea400 354.0px)"></div><div class="a" style="left:-4px;top:133px;width:354px;height:1px;background:linear-gradient(90deg,#f8ae00 0.0px,#f8ae00 4.0px,#f4c000 9.0px,#eaec00 13.9px,#eaec00 161.9px,#f8a400 166.3px,#ff7e00 170.8px,#f96400 173.3px,#f96400 179.3px,#ff7e00 183.8px,#f8a400 188.3px,#eaec00 193.5px,#eaec00 341.9px,#f8b900 345.9px,#fea400 350.0px,#fea400 354.0px)"></div><div class="a" style="left:-4px;top:134px;width:354px;height:1px;background:linear-gradient(90deg,#f8ad00 0.0px,#f8ad00 4.0px,#f4bf00 8.6px,#eaea00 13.2px,#eaea00 161.0px,#f8ae00 166.7px,#ff8e00 171.2px,#fb7400 173.2px,#fb7400 179.2px,#ff8e00 183.2px,#f8ae00 187.7px,#eaea00 193.0px,#eaea00 341.4px,#f8b900 345.7px,#fea400 350.0px,#fea400 354.0px)"></div><div class="a" style="left:-4px;top:135px;width:354px;height:1px;background:linear-gradient(90deg,#f8ad00 0.0px,#f8ad00 4.0px,#f4bf00 8.0px,#eae900 11.9px,#eae900 163.5px,#f8a700 167.5px,#ff8300 172.0px,#fa6900 173.9px,#fa6900 179.9px,#ff8300 183.7px,#f8a700 188.2px,#eae900 192.7px,#eae900 340.8px,#f8b800 345.4px,#fea400 350.0px,#fea400 354.0px)"></div><div class="a" style="left:-4px;top:136px;width:354px;height:1px;background:linear-gradient(90deg,#f8ad00 0.0px,#f8ad00 4.0px,#f4bf00 7.5px,#eaea00 11.0px,#eaea00 161.9px,#f8ac00 165.9px,#ff8b00 170.4px,#fb7100 172.6px,#fb7100 178.6px,#ff8b00 182.7px,#f8ac00 187.2px,#eaea00 192.9px,#eaea00 338.1px,#f8b900 344.0px,#fea400 350.0px,#fea400 354.0px)"></div><div class="a" style="left:-4px;top:137px;width:354px;height:1px;background:linear-gradient(90deg,#f8ad00 0.0px,#f8ad00 4.0px,#f4bf00 8.8px,#eae900 13.6px,#eae900 163.7px,#f8ad00 167.7px,#ff8d00 172.2px,#fb7300 173.5px,#fb7300 179.5px,#ff8d00 182.9px,#f8ad00 187.4px,#eae900 193.3px,#eae900 338.5px,#f8b900 344.3px,#fea400 350.0px,#fea400 354.0px)"></div><div class="a" style="left:-4px;top:138px;width:354px;height:1px;background:linear-gradient(90deg,#f8ad00 0.0px,#f8ad00 4.0px,#f4bf00 9.2px,#eae900 14.4px,#eae900 161.3px,#f8a700 166.2px,#ff8300 170.7px,#fa6900 173.1px,#fa6900 179.1px,#ff8300 183.6px,#f8a700 188.1px,#eae900 192.7px,#eae900 340.0px,#f8b900 345.0px,#fea400 350.0px,#fea400 354.0px)"></div><div class="a" style="left:-4px;top:139px;width:354px;height:1px;background:linear-gradient(90deg,#f8ad00 0.0px,#f8ad00 4.0px,#f4bf00 7.8px,#eae900 11.6px,#eae900 162.4px,#f8a200 166.4px,#ff7c00 170.9px,#f96200 173.5px,#f96200 179.5px,#ff7c00 184.1px,#f8a200 188.6px,#eae900 193.1px,#eae900 341.6px,#f8b900 345.8px,#fea400 350.0px,#fea400 354.0px)"></div><div class="a" style="left:-4px;top:140px;width:354px;height:1px;background:linear-gradient(90deg,#f8ad00 0.0px,#f8ad00 4.0px,#f4bf00 8.1px,#eaea00 12.2px,#eaea00 161.7px,#f8ae00 165.7px,#ff8e00 170.2px,#fb7400 173.5px,#fb7400 179.5px,#ff8e00 184.7px,#f8ae00 189.2px,#eaea00 194.6px,#eaea00 341.9px,#f8b900 346.0px,#fea400 350.0px,#fea400 354.0px)"></div><div class="a" style="left:-4px;top:141px;width:354px;height:1px;background:linear-gradient(90deg,#f8ad00 0.0px,#f8ad00 4.0px,#f4bf00 8.0px,#eaea00 12.1px,#eaea00 161.2px,#f8a000 165.2px,#ff7800 169.7px,#f85e00 173.0px,#f85e00 179.0px,#ff7800 184.4px,#f8a000 188.9px,#eaea00 194.1px,#eaea00 340.1px,#f8b900 345.1px,#fea400 350.0px,#fea400 354.0px)"></div><div class="a" style="left:-4px;top:142px;width:354px;height:1px;background:linear-gradient(90deg,#f8ad00 0.0px,#f8ad00 4.0px,#f4bf00 7.7px,#eaea00 11.3px,#eaea00 160.8px,#f8b200 164.8px,#ff9400 169.3px,#fc7a00 172.7px,#fc7a00 178.7px,#ff9400 184.0px,#f8b200 188.5px,#eaea00 193.1px,#eaea00 339.3px,#f8b900 344.7px,#fea400 350.0px,#fea400 354.0px)"></div><div class="a" style="left:-4px;top:143px;width:354px;height:1px;background:linear-gradient(90deg,#f8ad00 0.0px,#f8ad00 4.0px,#f4bf00 8.2px,#eae900 12.4px,#eae900 162.4px,#f8a600 166.4px,#ff8200 170.9px,#fa6800 174.4px,#fa6800 180.4px,#ff8200 185.8px,#f8a600 190.3px,#eae900 196.2px,#eae900 338.9px,#f8b800 344.5px,#fea400 350.0px,#fea400 354.0px)"></div><div class="a" style="left:-4px;top:144px;width:354px;height:1px;background:linear-gradient(90deg,#f8ad00 0.0px,#f8ad00 4.0px,#f4c000 8.9px,#eaeb00 13.9px,#eaeb00 162.6px,#f8a500 166.6px,#ff7f00 171.1px,#f96500 174.0px,#f96500 180.0px,#ff7f00 184.9px,#f8a500 189.4px,#eaeb00 195.2px,#eaeb00 340.5px,#f8b900 345.2px,#fea400 350.0px,#fea400 354.0px)"></div><div class="a" style="left:-4px;top:145px;width:354px;height:1px;background:linear-gradient(90deg,#f8ae00 0.0px,#f8ae00 4.0px,#f4c100 7.3px,#eaed00 10.6px,#eaed00 159.6px,#f8a600 166.0px,#ff8000 170.5px,#fa6600 173.6px,#fa6600 179.6px,#ff8000 184.8px,#f8a600 189.3px,#eaed00 193.6px,#eaed00 341.2px,#f8ba00 345.6px,#fea400 350.0px,#fea400 354.0px)"></div><div class="a" style="left:-4px;top:146px;width:354px;height:1px;background:linear-gradient(90deg,#f8ad00 0.0px,#f8ad00 4.0px,#f4bf00 8.8px,#eae900 13.5px,#eae900 161.4px,#f8aa00 165.9px,#ff8800 170.4px,#fb6e00 172.7px,#fb6e00 178.7px,#ff8800 183.0px,#f8aa00 187.5px,#eae900 192.5px,#eae900 339.4px,#f8b900 344.7px,#fea400 350.0px,#fea400 354.0px)"></div><div class="a" style="left:-4px;top:147px;width:354px;height:1px;background:linear-gradient(90deg,#f8ad00 0.0px,#f8ad00 4.0px,#f4c000 9.2px,#eaeb00 14.3px,#eaeb00 162.1px,#f8b400 166.9px,#ff9700 171.4px,#fd7d00 174.1px,#fd7d00 180.1px,#ff9700 184.9px,#f8b400 189.4px,#eaeb00 195.1px,#eaeb00 340.7px,#f8b900 345.4px,#fea400 350.0px,#fea400 354.0px)"></div><div class="a" style="left:-4px;top:148px;width:354px;height:1px;background:linear-gradient(90deg,#f8ad00 0.0px,#f8ad00 4.0px,#f4c000 9.6px,#eaec00 15.1px,#eaec00 162.3px,#f8b100 167.8px,#ff9200 172.3px,#fc7800 175.3px,#fc7800 181.3px,#ff9200 186.2px,#f8b100 190.7px,#eaec00 195.7px,#eaec00 339.7px,#f8b900 344.9px,#fea400 350.0px,#fea400 354.0px)"></div><div class="a" style="left:-4px;top:149px;width:354px;height:1px;background:linear-gradient(90deg,#f8ad00 0.0px,#f8ad00 4.0px,#f4bf00 8.4px,#eaea00 12.7px,#eaea00 163.7px,#f8a400 168.5px,#ff7e00 173.0px,#f96400 175.2px,#f96400 181.2px,#ff7e00 185.4px,#f8a400 189.9px,#eaea00 194.3px,#eaea00 339.9px,#f8b900 345.0px,#fea400 350.0px,#fea400 354.0px)"></div><div class="a" style="left:-4px;top:150px;width:354px;height:1px;background:linear-gradient(90deg,#f8ac00 0.0px,#f8ac00 4.0px,#f4be00 7.2px,#eae900 10.3px,#eae900 161.7px,#f8ae00 166.8px,#ff8e00 171.3px,#fb7400 173.5px,#fb7400 179.5px,#ff8e00 183.6px,#f8ae00 188.1px,#eae900 193.7px,#eae900 340.1px,#f8b800 345.0px,#fea400 350.0px,#fea400 354.0px)"></div><div class="a" style="left:-4px;top:151px;width:354px;height:1px;background:linear-gradient(90deg,#f8ac00 0.0px,#f8ac00 4.0px,#f4bf00 9.3px,#eae900 14.6px,#eae900 164.4px,#f8a400 168.4px,#ff7f00 172.9px,#f96500 173.7px,#f96500 179.7px,#ff7f00 182.6px,#f8a400 187.1px,#eae900 192.7px,#eae900 340.4px,#f8b800 345.2px,#fea400 350.0px,#fea400 354.0px)"></div><div class="a" style="left:-4px;top:152px;width:354px;height:1px;background:linear-gradient(90deg,#f8ad00 0.0px,#f8ad00 4.0px,#f4c000 8.2px,#eaec00 12.3px,#eaec00 164.7px,#f8a600 168.7px,#ff8100 173.2px,#fa6700 174.1px,#fa6700 180.1px,#ff8100 182.9px,#f8a600 187.4px,#eaec00 193.1px,#eaec00 338.7px,#f8b900 344.3px,#fea400 350.0px,#fea400 354.0px)"></div><div class="a" style="left:-4px;top:153px;width:354px;height:1px;background:linear-gradient(90deg,#f8ad00 0.0px,#f8ad00 4.0px,#f4c000 8.3px,#eaeb00 12.5px,#eaeb00 164.9px,#f8b100 168.9px,#ff9200 173.4px,#fc7800 174.7px,#fc7800 180.7px,#ff9200 184.0px,#f8b100 188.5px,#eaeb00 192.8px,#eaeb00 340.5px,#f8b900 345.2px,#fea400 350.0px,#fea400 354.0px)"></div><div class="a" style="left:-4px;top:154px;width:354px;height:1px;background:linear-gradient(90deg,#f8ad00 0.0px,#f8ad00 4.0px,#f4c000 7.7px,#eaeb00 11.3px,#eaeb00 163.5px,#f8ac00 167.5px,#ff8a00 172.0px,#fb7000 173.3px,#fb7000 179.3px,#ff8a00 182.6px,#f8ac00 187.1px,#eaeb00 193.0px,#eaeb00 341.5px,#f8b900 345.7px,#fea400 350.0px,#fea400 354.0px)"></div><div class="a" style="left:-4px;top:155px;width:354px;height:1px;background:linear-gradient(90deg,#f8ad00 0.0px,#f8ad00 4.0px,#f4c000 8.0px,#eaeb00 12.1px,#eaeb00 164.1px,#f8b300 168.1px,#ff9500 172.6px,#fd7b00 173.8px,#fd7b00 179.8px,#ff9500 183.1px,#f8b300 187.6px,#eaeb00 191.7px,#eaeb00 339.1px,#f8b900 344.6px,#fea400 350.0px,#fea400 354.0px)"></div><div class="a" style="left:-4px;top:156px;width:354px;height:1px;background:linear-gradient(90deg,#f8ac00 0.0px,#f8ac00 4.0px,#f4be00 7.0px,#eae900 9.9px,#eae900 162.6px,#f8b400 167.4px,#ff9700 171.9px,#fd7d00 174.2px,#fd7d00 180.2px,#ff9700 184.4px,#f8b400 188.9px,#eae900 193.0px,#eae900 339.8px,#f8b800 344.9px,#fea400 350.0px,#fea400 354.0px)"></div><div class="a" style="left:-4px;top:157px;width:354px;height:1px;background:linear-gradient(90deg,#f8ad00 0.0px,#f8ad00 4.0px,#f4bf00 7.6px,#eaea00 11.2px,#eaea00 162.2px,#f8b100 167.2px,#ff9200 171.7px,#fc7800 174.5px,#fc7800 180.5px,#ff9200 185.3px,#f8b100 189.8px,#eaea00 195.0px,#eaea00 338.9px,#f8b900 344.5px,#fea400 350.0px,#fea400 354.0px)"></div><div class="a" style="left:-4px;top:158px;width:354px;height:1px;background:linear-gradient(90deg,#f8ae00 0.0px,#f8ae00 4.0px,#f4c100 7.9px,#eaed00 11.9px,#eaed00 163.8px,#f8b100 168.2px,#ff9100 172.7px,#fc7700 174.8px,#fc7700 180.8px,#ff9100 184.9px,#f8b100 189.4px,#eaed00 193.6px,#eaed00 338.3px,#f8ba00 344.1px,#fea400 350.0px,#fea400 354.0px)"></div><div class="a" style="left:-4px;top:159px;width:354px;height:1px;background:linear-gradient(90deg,#f8ad00 0.0px,#f8ad00 4.0px,#f4bf00 8.4px,#eae900 12.8px,#eae900 163.0px,#f89f00 167.0px,#ff7700 171.5px,#f85d00 173.7px,#f85d00 179.7px,#ff7700 184.0px,#f89f00 188.5px,#eae900 192.7px,#eae900 339.5px,#f8b900 344.7px,#fea400 350.0px,#fea400 354.0px)"></div><div class="a" style="left:-4px;top:160px;width:354px;height:1px;background:linear-gradient(90deg,#f8ad00 0.0px,#f8ad00 4.0px,#f4bf00 7.7px,#eae900 11.4px,#eae900 163.4px,#f8a400 167.6px,#ff7f00 172.1px,#f96500 173.8px,#f96500 179.8px,#ff7f00 183.6px,#f8a400 188.1px,#eae900 193.9px,#eae900 340.8px,#f8b900 345.4px,#fea400 350.0px,#fea400 354.0px)"></div><div class="a" style="left:-4px;top:161px;width:354px;height:1px;background:linear-gradient(90deg,#f8ac00 0.0px,#f8ac00 4.0px,#f4be00 7.3px,#eae800 10.6px,#eae800 163.9px,#f8a200 167.9px,#ff7d00 172.4px,#f96300 174.9px,#f96300 180.9px,#ff7d00 185.5px,#f8a200 190.0px,#eae800 194.9px,#eae800 340.3px,#f8b800 345.2px,#fea400 350.0px,#fea400 354.0px)"></div><div class="a" style="left:-4px;top:162px;width:354px;height:1px;background:linear-gradient(90deg,#f8ae00 0.0px,#f8ae00 4.0px,#f4c000 7.8px,#eaec00 11.6px,#eaec00 162.8px,#f8ae00 166.8px,#ff8c00 171.3px,#fb7200 174.1px,#fb7200 180.1px,#ff8c00 184.9px,#f8ae00 189.4px,#eaec00 194.0px,#eaec00 338.2px,#f8b900 344.1px,#fea400 350.0px,#fea400 354.0px)"></div><div class="a" style="left:-4px;top:163px;width:354px;height:1px;background:linear-gradient(90deg,#f8ae00 0.0px,#f8ae00 4.0px,#f4c000 10.0px,#eaec00 16.0px,#eaec00 163.3px,#f8af00 167.4px,#ff8e00 171.9px,#fc7400 174.7px,#fc7400 180.7px,#ff8e00 185.6px,#f8af00 190.1px,#eaec00 194.4px,#eaec00 341.5px,#f8ba00 345.8px,#fea400 350.0px,#fea400 354.0px)"></div><div class="a" style="left:-4px;top:164px;width:354px;height:1px;background:linear-gradient(90deg,#f8ac00 0.0px,#f8ac00 4.0px,#f4be00 8.8px,#eae800 13.6px,#eae800 164.1px,#f8a900 168.7px,#ff8700 173.2px,#fb6d00 174.7px,#fb6d00 180.7px,#ff8700 184.2px,#f8a900 188.7px,#eae800 194.6px,#eae800 342.0px,#f8b800 346.0px,#fea400 350.0px,#fea400 354.0px)"></div><div class="a" style="left:-4px;top:165px;width:354px;height:1px;background:linear-gradient(90deg,#f8ad00 0.0px,#f8ad00 4.0px,#f4c000 9.8px,#eaeb00 15.6px,#eaeb00 165.4px,#f8a800 169.4px,#ff8300 173.9px,#fa6900 175.4px,#fa6900 181.4px,#ff8300 184.8px,#f8a800 189.3px,#eaeb00 195.0px,#eaeb00 338.9px,#f8b900 344.5px,#fea400 350.0px,#fea400 354.0px)"></div><div class="a" style="left:-4px;top:166px;width:354px;height:1px;background:linear-gradient(90deg,#f8ae00 0.0px,#f8ae00 4.0px,#f4c100 7.8px,#eaed00 11.7px,#eaed00 338.2px,#f8ba00 344.1px,#fea400 350.0px,#fea400 354.0px)"></div><div class="a" style="left:-4px;top:167px;width:354px;height:1px;background:linear-gradient(90deg,#f8ad00 0.0px,#f8ad00 4.0px,#f4bf00 9.1px,#eaea00 14.1px,#eaea00 341.0px,#f8b900 345.5px,#fea400 350.0px,#fea400 354.0px)"></div><div class="a" style="left:-4px;top:168px;width:354px;height:1px;background:linear-gradient(90deg,#f8ae00 0.0px,#f8ae00 4.0px,#f4c100 7.3px,#eaed00 10.6px,#eaed00 339.7px,#f8ba00 344.8px,#fea400 350.0px,#fea400 354.0px)"></div><div class="a" style="left:-4px;top:169px;width:354px;height:1px;background:linear-gradient(90deg,#f4ca00 0.0px,#f4ca00 4.0px,#f1d300 5.5px,#eae900 7.0px,#eae900 340.4px,#f8b900 345.2px,#fea400 350.0px,#fea400 354.0px)"></div><div class="a" style="left:-4px;top:170px;width:354px;height:1px;background:linear-gradient(90deg,#f4ca00 0.0px,#f4ca00 4.0px,#f1d400 5.5px,#eaea00 7.0px,#eaea00 339.4px,#f8b900 344.7px,#fea400 350.0px,#fea400 354.0px)"></div><div class="a" style="left:-4px;top:171px;width:354px;height:1px;background:linear-gradient(90deg,#f4cb00 0.0px,#f4cb00 4.0px,#f1d500 5.5px,#eaec00 7.0px,#eaec00 340.5px,#f8b900 345.3px,#fea400 350.0px,#fea400 354.0px)"></div><div class="a" style="left:-4px;top:172px;width:354px;height:1px;background:linear-gradient(90deg,#f4cb00 0.0px,#f4cb00 4.0px,#f1d400 5.5px,#eaeb00 7.0px,#eaeb00 340.6px,#f8b900 345.3px,#fea400 350.0px,#fea400 354.0px)"></div><div class="a" style="left:-4px;top:173px;width:354px;height:1px;background:linear-gradient(90deg,#f4ca00 0.0px,#f4ca00 4.0px,#f1d300 5.5px,#eae900 7.0px,#eae900 338.4px,#f8b900 344.2px,#fea400 350.0px,#fea400 354.0px)"></div><div class="a" style="left:-4px;top:174px;width:354px;height:1px;background:linear-gradient(90deg,#f4ca00 0.0px,#f4ca00 4.0px,#f1d300 5.5px,#eaea00 7.0px,#eaea00 341.6px,#f8b900 345.8px,#fea400 350.0px,#fea400 354.0px)"></div><div class="a" style="left:-4px;top:175px;width:354px;height:1px;background:linear-gradient(90deg,#f4ca00 0.0px,#f4ca00 4.0px,#f1d300 5.5px,#eaea00 7.0px,#eaea00 339.0px,#f8b900 344.5px,#fea400 350.0px,#fea400 354.0px)"></div><div class="a" style="left:-4px;top:176px;width:354px;height:1px;background:linear-gradient(90deg,#f4ca00 0.0px,#f4ca00 4.0px,#f1d300 5.5px,#eae900 7.0px,#eae900 339.0px,#f8b800 344.5px,#fea400 350.0px,#fea400 354.0px)"></div><div class="a" style="left:-4px;top:177px;width:354px;height:1px;background:linear-gradient(90deg,#f4ca00 0.0px,#f4ca00 4.0px,#f1d400 5.5px,#eaeb00 7.0px,#eaeb00 339.3px,#f8b900 344.6px,#fea400 350.0px,#fea400 354.0px)"></div><div class="a" style="left:-4px;top:178px;width:354px;height:1px;background:linear-gradient(90deg,#f4c900 0.0px,#f4c900 4.0px,#f1d300 5.5px,#eae900 7.0px,#eae900 341.6px,#f8b800 345.8px,#fea400 350.0px,#fea400 354.0px)"></div><div class="a" style="left:-4px;top:179px;width:354px;height:1px;background:linear-gradient(90deg,#ffa000 0.0px,#ffa000 4.0px,#f9b600 7.5px,#eae900 11.0px,#eae900 340.6px,#f8b800 345.3px,#fea400 350.0px,#fea400 354.0px)"></div><div class="a" style="left:-4px;top:180px;width:354px;height:1px;background:linear-gradient(90deg,#ffa000 0.0px,#ffa000 4.0px,#f9b600 7.5px,#eaea00 11.0px,#eaea00 342.0px,#f8b900 346.0px,#fea400 350.0px,#fea400 354.0px)"></div><div class="a" style="left:-4px;top:181px;width:354px;height:1px;background:linear-gradient(90deg,#ffa000 0.0px,#ffa000 4.0px,#f9b600 7.5px,#eaeb00 11.0px,#eaeb00 340.4px,#f8b900 345.2px,#fea400 350.0px,#fea400 354.0px)"></div><div class="a" style="left:-4px;top:182px;width:354px;height:1px;background:linear-gradient(90deg,#ffa000 0.0px,#ffa000 4.0px,#f9b600 7.5px,#eaea00 11.0px,#eaea00 339.9px,#f8b900 344.9px,#fea400 350.0px,#fea400 354.0px)"></div><div class="a" style="left:-4px;top:183px;width:354px;height:1px;background:linear-gradient(90deg,#ffa000 0.0px,#ffa000 4.0px,#f9b700 7.5px,#eaed00 11.0px,#eaed00 341.2px,#f8ba00 345.6px,#fea400 350.0px,#fea400 354.0px)"></div><div class="a" style="left:-4px;top:184px;width:354px;height:1px;background:linear-gradient(90deg,#ffa000 0.0px,#ffa000 4.0px,#f9b700 7.5px,#eaec00 11.0px,#eaec00 340.7px,#f8ba00 345.4px,#fea400 350.0px,#fea400 354.0px)"></div><div class="a" style="left:-4px;top:185px;width:354px;height:1px;background:linear-gradient(90deg,#ffa000 0.0px,#ffa000 4.0px,#f9b700 7.5px,#eaec00 11.0px,#eaec00 341.6px,#f8b900 345.8px,#fea400 350.0px,#fea400 354.0px)"></div><div class="a" style="left:-4px;top:186px;width:354px;height:1px;background:linear-gradient(90deg,#ffa000 0.0px,#ffa000 4.0px,#f9b700 7.5px,#eaed00 11.0px,#eaed00 340.3px,#f8ba00 345.1px,#fea400 350.0px,#fea400 354.0px)"></div><div class="a" style="left:-4px;top:187px;width:354px;height:1px;background:linear-gradient(90deg,#ffa000 0.0px,#ffa000 4.0px,#f9b700 7.5px,#eaed00 11.0px,#eaed00 341.1px,#f8ba00 345.6px,#fea400 350.0px,#fea400 354.0px)"></div><div class="a" style="left:-4px;top:188px;width:354px;height:1px;background:linear-gradient(90deg,#ffa000 0.0px,#ffa000 4.0px,#f9b600 7.5px,#eaea00 11.0px,#eaea00 339.2px,#f8b900 344.6px,#fea400 350.0px,#fea400 354.0px)"></div><div class="a" style="left:-4px;top:189px;width:354px;height:1px;background:linear-gradient(90deg,#ffa000 0.0px,#ffa000 4.0px,#f9b600 7.5px,#eae900 11.0px,#eae900 340.9px,#f8b800 345.5px,#fea400 350.0px,#fea400 354.0px)"></div><div class="a" style="left:-4px;top:190px;width:354px;height:1px;background:linear-gradient(90deg,#ffa000 0.0px,#ffa000 4.0px,#f9b700 7.5px,#eaeb00 11.0px,#eaeb00 338.2px,#f8b900 344.1px,#fea400 350.0px,#fea400 354.0px)"></div><div class="a" style="left:-4px;top:191px;width:354px;height:1px;background:linear-gradient(90deg,#ffa000 0.0px,#ffa000 4.0px,#f9b600 7.5px,#eaea00 11.0px,#eaea00 341.3px,#f8b900 345.6px,#fea400 350.0px,#fea400 354.0px)"></div><div class="a" style="left:-4px;top:192px;width:354px;height:1px;background:linear-gradient(90deg,#f4ca00 0.0px,#f4ca00 4.0px,#f1d300 5.5px,#eaea00 7.0px,#eaea00 338.0px,#f8b900 344.0px,#fea400 350.0px,#fea400 354.0px)"></div><div class="a" style="left:-4px;top:193px;width:354px;height:1px;background:linear-gradient(90deg,#f4c900 0.0px,#f4c900 4.0px,#f1d300 5.5px,#eae900 7.0px,#eae900 339.5px,#f8b800 344.7px,#fea400 350.0px,#fea400 354.0px)"></div><div class="a" style="left:-4px;top:194px;width:354px;height:1px;background:linear-gradient(90deg,#f4ca00 0.0px,#f4ca00 4.0px,#f1d400 5.5px,#eaea00 7.0px,#eaea00 339.4px,#f8b900 344.7px,#fea400 350.0px,#fea400 354.0px)"></div><div class="a" style="left:-4px;top:195px;width:354px;height:1px;background:linear-gradient(90deg,#f4ca00 0.0px,#f4ca00 4.0px,#f1d300 5.5px,#eae900 7.0px,#eae900 339.5px,#f8b800 344.8px,#fea400 350.0px,#fea400 354.0px)"></div><div class="a" style="left:-4px;top:196px;width:354px;height:1px;background:linear-gradient(90deg,#f4cb00 0.0px,#f4cb00 4.0px,#f1d500 5.5px,#eaec00 7.0px,#eaec00 338.6px,#f8ba00 344.3px,#fea400 350.0px,#fea400 354.0px)"></div><div class="a" style="left:-4px;top:197px;width:354px;height:1px;background:linear-gradient(90deg,#f4cb00 0.0px,#f4cb00 4.0px,#f1d400 5.5px,#eaeb00 7.0px,#eaeb00 340.0px,#f8b900 345.0px,#fea400 350.0px,#fea400 354.0px)"></div><div class="a" style="left:-4px;top:198px;width:354px;height:1px;background:linear-gradient(90deg,#f4ca00 0.0px,#f4ca00 4.0px,#f1d400 5.5px,#eaeb00 7.0px,#eaeb00 341.5px,#f8b900 345.8px,#fea400 350.0px,#fea400 354.0px)"></div><div class="a" style="left:-4px;top:199px;width:354px;height:1px;background:linear-gradient(90deg,#f4cb00 0.0px,#f4cb00 4.0px,#f1d500 5.5px,#eaec00 7.0px,#eaec00 339.2px,#f8ba00 344.6px,#fea400 350.0px,#fea400 354.0px)"></div><div class="a" style="left:-4px;top:200px;width:354px;height:1px;background:linear-gradient(90deg,#f4ca00 0.0px,#f4ca00 4.0px,#f1d400 5.5px,#eaea00 7.0px,#eaea00 339.3px,#f8b900 344.7px,#fea400 350.0px,#fea400 354.0px)"></div><div class="a" style="left:-4px;top:201px;width:354px;height:1px;background:linear-gradient(90deg,#f4ca00 0.0px,#f4ca00 4.0px,#f1d400 5.5px,#eaea00 7.0px,#eaea00 340.5px,#f8b900 345.2px,#fea400 350.0px,#fea400 354.0px)"></div><div class="a" style="left:8px;top:78.8px;width:330px;height:1px;background:rgba(255,165,0,0.4)"></div><svg class="a" style="left:0;top:0" width="346" height="198" viewBox="0 0 346 198"><defs><filter id="bb" x="-50%" y="-50%" width="200%" height="200%"><feGaussianBlur stdDeviation="1.6"/></filter></defs><g filter="url(#bb)"><polygon points="139.0,170.5 146.0,168.8 163.0,169.2 167.0,174.0 166.0,179.0 152.0,179.5 141.0,177.0" fill="#ff8000" opacity="1"/><polygon points="160.0,182.5 171.0,181.2 185.0,182.5 188.0,187.5 182.0,193.3 165.0,193.3 161.0,189.0" fill="#ff8000" opacity="1"/><polygon points="156.0,179.0 178.0,179.5 176.0,182.0 159.0,182.0" fill="#ffae00" opacity="0.8"/><polygon points="140.0,194.5 155.0,194.3 156.0,200.0 140.0,200.0" fill="#ff9000" opacity="1"/><polygon points="318.0,170.0 326.0,168.5 333.0,169.5 334.0,175.0 332.0,180.5 321.0,180.5 317.5,176.0" fill="#ff9600" opacity="0.95"/><ellipse cx="324" cy="196" rx="8" ry="2.5" fill="#ffb000" opacity="0.6"/><ellipse cx="3" cy="186" rx="4" ry="5" fill="#ffa000" opacity="0.9"/></g></svg></div><svg class="a" style="left:0;top:0" width="346" height="198" viewBox="0 0 346 198"><defs><filter id="nz" x="0" y="0" width="100%" height="100%"><feTurbulence type="fractalNoise" baseFrequency="0.6" numOctaves="2" seed="4"/><feColorMatrix type="matrix" values="0 0 0 0 0.86  0 0 0 0 0.9  0 0 0 0 0.12  6 0 0 0 -3.2"/><feGaussianBlur stdDeviation="0.75"/></filter></defs><defs><linearGradient id="nm" x1="0" y1="0" x2="346" y2="0" gradientUnits="userSpaceOnUse"><stop offset="0" stop-color="#fff" stop-opacity="0.3"/><stop offset="0.04" stop-color="#fff"/><stop offset="0.42" stop-color="#fff"/><stop offset="0.44" stop-color="#000"/><stop offset="0.555" stop-color="#000"/><stop offset="0.575" stop-color="#fff"/><stop offset="0.96" stop-color="#fff"/><stop offset="1" stop-color="#fff" stop-opacity="0.3"/></linearGradient><mask id="mk"><rect x="0" y="0" width="346" height="198" fill="url(#nm)"/></mask></defs><g mask="url(#mk)"><rect x="0" y="0" width="346" height="126" filter="url(#nz)" opacity="0.6"/><rect x="0" y="126" width="346" height="72" filter="url(#nz)" opacity="0.3"/></g></svg><div class="a" style="left:134.5px;top:0;width:1px;height:166px;background:linear-gradient(rgba(255,165,0,0.5),rgba(255,165,0,0.42));filter:blur(0.25px)"></div></div>
<div class="a" style="left:380px;top:60px;width:1px;height:332px;background:#b8b8b8"></div>
<div class="dtitle" style="top:60px"></div>
<svg class="a" style="left:378px;top:57px" width="26" height="16" viewBox="378 57 26 16"><circle cx="386.6" cy="65.6" r="4.3" fill="#575757"/><path d="M384.8 63.8 L388.4 67.39999999999999 M388.4 63.8 L384.8 67.39999999999999" stroke="#fff" stroke-width="1.25"/><circle cx="397.4" cy="65.6" r="4.3" fill="#575757"/><rect x="396.3" y="63.3" width="3" height="2.6" fill="none" stroke="#e8e8e8" stroke-width="0.6"/><rect x="394.9" y="65.0" width="3.8" height="2.6" fill="#575757" stroke="#fff" stroke-width="0.9"/></svg>
<div class="t" style="left:469px;top:63.5px;font-size:6.6px;color:#333">Receiver Options</div>
<div class="a dark" style="left:383.8px;top:74px;width:199px;height:19.2px"></div>
<svg class="a" style="left:0;top:0" width="620" height="100" viewBox="0 0 620 100"><path d="M467.4 77.2 V89.8 H465.6 V80.6 Q464 81.6 461.3 81.9 V80.4 Q464.6 79.8 465.9 77.2 Z" fill="#f7dfc2"/></svg>
<div class="t" style="left:453.90000000000003px;top:75.5px;font-size:17.6px;color:#f7dfc2;-webkit-text-stroke:0.35px #f7dfc2">-</div>
<div class="t" style="left:473.3px;top:75.5px;font-size:17.6px;color:#f7dfc2;-webkit-text-stroke:0.35px #f7dfc2">.</div>
<div class="t" style="left:484.20000000000005px;top:75.5px;font-size:17.6px;color:#f7dfc2;-webkit-text-stroke:0.35px #f7dfc2">0</div>
<div class="t" style="left:504.6px;top:75.5px;font-size:17.6px;color:#f7dfc2;-webkit-text-stroke:0.35px #f7dfc2">0</div>
<div class="t" style="left:525.2px;top:75.5px;font-size:17.6px;color:#f7dfc2;-webkit-text-stroke:0.35px #f7dfc2">0</div>
<div class="t" style="left:551.5px;top:78.4px;font-size:11.8px;color:#a2a6aa">kHz</div>
<div class="lbl" style="left:384px;top:96.8px;font-size:8.9px">Hardware freq:</div>
<div class="lbl lr" style="right:36.8px;top:96.8px;font-size:8.95px">96.201000 MHz</div>
<div class="lbl lr" style="right:186.6px;top:111.4px">Filter width</div>
<div class="combo" style="top:109.6px"><span>User (252 k)</span><div class="bl"></div><svg width="11" height="12" viewBox="0 0 11 12"><path d="M3.2 4.9 L5.4 2.7 L7.6 4.9 M3.2 7.1 L5.4 9.3 L7.6 7.1" fill="none" stroke="#f2f6ff" stroke-width="0.95"/></svg></div>
<div class="lbl lr" style="right:186.6px;top:125.9px">Filter shape</div>
<div class="combo" style="top:124.4px"><span>Normal</span><div class="bl"></div><svg width="11" height="12" viewBox="0 0 11 12"><path d="M3.2 4.9 L5.4 2.7 L7.6 4.9 M3.2 7.1 L5.4 9.3 L7.6 7.1" fill="none" stroke="#f2f6ff" stroke-width="0.95"/></svg></div>
<div class="lbl lr" style="right:186.4px;top:144.2px">Mode</div>
<div class="combo" style="top:142.8px"><span>WFM (stereo)</span><div class="bl"></div><svg width="11" height="12" viewBox="0 0 11 12"><path d="M3.2 4.9 L5.4 2.7 L7.6 4.9 M3.2 7.1 L5.4 9.3 L7.6 7.1" fill="none" stroke="#f2f6ff" stroke-width="0.95"/></svg></div>
<div class="btn" style="left:550.8px;top:141.7px;width:25.4px;line-height:10.4px;"><b>...</b></div>
<div class="lbl lr" style="right:186.4px;top:165.5px">AGC</div>
<div class="combo" style="top:164.5px"><span>Fast</span><div class="bl"></div><svg width="11" height="12" viewBox="0 0 11 12"><path d="M3.2 4.9 L5.4 2.7 L7.6 4.9 M3.2 7.1 L5.4 9.3 L7.6 7.1" fill="none" stroke="#f2f6ff" stroke-width="0.95"/></svg></div>
<div class="btn" style="left:550.8px;top:164.1px;width:25.4px;line-height:10.4px;"><b>...</b></div>
<div class="lbl lr" style="right:186.5px;top:188.1px">Squelch</div>
<div class="a" style="left:437.3px;top:185.3px;width:96.8px;height:13.3px;background:#fff;box-shadow:0 0 0 0.6px #c4c4c4"></div>
<div class="lbl lr" style="right:89.3px;top:188.1px">-150.0 dBFS</div>
<div class="a" style="left:536.4px;top:186.4px;width:6.8px;height:12.3px;border-radius:3.4px;background:#fff;box-shadow:0 0 0 0.6px #c8c8c8,0 0.6px 0.8px #bbb"></div>
<svg class="a" style="left:530px;top:182px" width="20" height="20" viewBox="530 182 20 20"><path d="M538.1 190.9 L539.8 189.2 L541.5 190.9 M538.1 194.1 L539.8 195.8 L541.5 194.1" fill="none" stroke="#444" stroke-width="0.9"/></svg>
<div class="btn" style="left:551px;top:185px;width:24.8px;"><b>A</b></div>
<div class="lbl lr" style="right:186.5px;top:209.8px">Noise blanker</div>
<div class="btn" style="left:440.5px;top:207.1px;width:48px;"><b>NB1</b></div>
<div class="btn" style="left:492.8px;top:206.6px;width:47.5px;"><b>NB2</b></div>
<div class="btn" style="left:547.4px;top:208.4px;width:31.6px;line-height:10.4px;"><b>...</b></div>
<div class="a" style="left:382.4px;top:248.7px;width:201.6px;height:12px;background:#fff;border-radius:2.5px;box-shadow:0 0 0 0.5px #c8c8c8"></div>
<div class="a" style="left:445.3px;top:248.7px;width:79.4px;height:12px;background:linear-gradient(#5ea5fb,#2f78f0)"></div>
<div class="lbl" style="left:388.6px;top:250.4px;font-size:9px">Input controls</div>
<div class="lbl" style="left:454.5px;top:250.4px;color:#fff;font-size:8.9px">Receiver Options</div>
<div class="lbl" style="left:532px;top:250.4px;font-size:8.9px">FFT Settings</div>
<div class="dtitle" style="top:262.2px;height:11.5px"></div>
<svg class="a" style="left:378px;top:259px" width="26" height="16" viewBox="378 259 26 16"><circle cx="386.6" cy="267.6" r="4.3" fill="#575757"/><path d="M384.8 265.8 L388.4 269.40000000000003 M388.4 265.8 L384.8 269.40000000000003" stroke="#fff" stroke-width="1.25"/><circle cx="397.4" cy="267.6" r="4.3" fill="#575757"/><rect x="396.3" y="265.3" width="3" height="2.6" fill="none" stroke="#e8e8e8" stroke-width="0.6"/><rect x="394.9" y="267.0" width="3.8" height="2.6" fill="#575757" stroke="#fff" stroke-width="0.9"/></svg>
<div class="t" style="left:485.5px;top:264.5px;font-size:6.6px;color:#333">Audio</div>
<div class="a" style="left:388.1px;top:282px;width:190.6px;height:30px;background:linear-gradient(#252525,#090909)"></div>
<svg class="a" style="left:0;top:0" width="620" height="454" viewBox="0 0 620 454"><line x1="412.1" y1="282" x2="412.1" y2="305" stroke="#505050" stroke-width="0.6" stroke-dasharray="1,1.5"/><line x1="435.9" y1="282" x2="435.9" y2="305" stroke="#505050" stroke-width="0.6" stroke-dasharray="1,1.5"/><line x1="459.5" y1="282" x2="459.5" y2="305" stroke="#505050" stroke-width="0.6" stroke-dasharray="1,1.5"/><line x1="483.4" y1="282" x2="483.4" y2="305" stroke="#505050" stroke-width="0.6" stroke-dasharray="1,1.5"/><line x1="507.6" y1="282" x2="507.6" y2="305" stroke="#505050" stroke-width="0.6" stroke-dasharray="1,1.5"/><line x1="531" y1="282" x2="531" y2="305" stroke="#505050" stroke-width="0.6" stroke-dasharray="1,1.5"/><line x1="554.8" y1="282" x2="554.8" y2="305" stroke="#505050" stroke-width="0.6" stroke-dasharray="1,1.5"/><line x1="405" y1="297.3" x2="578.7" y2="297.3" stroke="#505050" stroke-width="0.6" stroke-dasharray="1,1.5"/><polyline points="388.1,293.6 389.3,295.5 390.5,297.4 391.7,300.1 392.9,302.5 394.1,299.8 395.3,297.3 396.5,296.1 397.7,296.4 398.9,297.5 400.1,296.3 401.3,298.5 402.5,296.9 403.7,299.2 404.9,297.8 406.1,299.6 407.3,299.3 408.5,301.5 409.7,299.9 410.9,301.5 412.1,300.0 413.3,300.7 414.5,299.5 415.7,300.7 416.9,299.7 418.1,301.1 419.3,300.9 420.5,302.1 421.7,300.6 422.9,302.3 424.1,300.9 425.3,302.0 426.5,300.5 427.7,303.1 428.9,303.2 430.1,302.8 431.3,300.7 432.5,301.2 433.7,301.6 434.9,304.3 436.1,302.0 437.3,302.3 438.5,299.5 439.7,302.0 440.9,302.0 442.1,303.8 443.3,301.6 444.5,302.7 445.7,300.0 446.9,301.3 448.1,300.2 449.3,301.6 450.5,301.1 451.7,302.2 452.9,301.9 454.1,303.0 455.3,301.7 456.5,302.3 457.7,301.0 458.9,301.9 460.1,301.0 461.3,302.7 462.5,301.5 463.7,302.3 464.9,300.0 466.1,300.2 467.3,297.9 468.5,300.1 469.7,300.2 470.9,301.2 472.1,298.7 473.3,299.2 474.5,299.1 475.7,301.7 476.9,301.5 478.1,301.6 479.3,300.3 480.5,301.0 481.7,300.0 482.9,301.9 484.1,301.0 485.3,303.0 486.5,301.0 487.7,302.7 488.9,301.8 490.1,303.1 491.3,301.6 492.5,302.7 493.7,301.5 494.9,303.2 496.1,301.3 497.3,302.4 498.5,301.1 499.7,302.3 500.9,301.6 502.1,303.0 503.3,301.4 504.5,303.1 505.7,301.8 506.9,303.7 508.1,302.7 509.3,304.0 510.5,303.5 511.7,304.5 512.9,304.2 514.1,305.8 515.3,304.2 516.5,306.1 517.7,305.9 518.9,307.7 520.1,307.1 521.3,307.5 522.5,307.9 523.7,309.0 524.9,310.6 526.1,311.8 526.5,312.2" fill="none" stroke="#e6e6e6" stroke-width="0.8" stroke-linejoin="round"/></svg>
<div class="t" style="left:396.2px;top:294.2px;font-size:6.5px;color:#dcae82">-65</div>
<div class="t" style="left:401.7px;width:20px;text-align:center;top:305.2px;font-size:7.3px;color:#dab48e;-webkit-text-stroke:0.15px #dab48e">3</div>
<div class="t" style="left:425.5px;width:20px;text-align:center;top:305.2px;font-size:7.3px;color:#dab48e;-webkit-text-stroke:0.15px #dab48e">6</div>
<div class="t" style="left:449.3px;width:20px;text-align:center;top:305.2px;font-size:7.3px;color:#dab48e;-webkit-text-stroke:0.15px #dab48e">9</div>
<div class="t" style="left:473.2px;width:20px;text-align:center;top:305.2px;font-size:7.3px;color:#dab48e;-webkit-text-stroke:0.15px #dab48e">12</div>
<div class="t" style="left:497.7px;width:20px;text-align:center;top:305.2px;font-size:7.3px;color:#dab48e;-webkit-text-stroke:0.15px #dab48e">15</div>
<div class="t" style="left:521.1px;width:20px;text-align:center;top:305.2px;font-size:7.3px;color:#dab48e;-webkit-text-stroke:0.15px #dab48e">18</div>
<div class="t" style="left:544.4px;width:20px;text-align:center;top:305.2px;font-size:7.3px;color:#dab48e;-webkit-text-stroke:0.15px #dab48e">21</div>
<div class="lbl" style="left:388.7px;top:320.9px">Gain:</div>
<div class="a" style="left:410.6px;top:324.4px;width:82px;height:1.9px;border-radius:1px;background:#3d8ef7"></div>
<div class="a" style="left:493px;top:324.5px;width:57.5px;height:1.7px;border-radius:1px;background:#c8c8c8"></div>
<div class="a" style="left:488.7px;top:320.7px;width:9px;height:9px;border-radius:50%;background:#fff;box-shadow:0 0.5px 1px #888"></div>
<div class="lbl lr" style="right:41.6px;top:320.9px">-2.1 dB</div>
<div class="btn" style="left:392.6px;top:346.8px;width:45.4px;"><b>UDP</b></div>
<div class="btn" style="left:442.9px;top:345.8px;width:38.3px;"><b>Rec</b></div>
<div class="btn" style="left:489.4px;top:345.6px;width:38.3px;background:#f2f2f2;color:#999"><b>Play</b></div>
<div class="btn" style="left:535.8px;top:345.6px;width:38.7px;line-height:10.4px;"><b>...</b></div>
<div class="lbl" style="left:475.8px;top:376.2px;font-style:italic">DSP</div>
<div class="a" style="left:34px;top:392.4px;width:552px;height:13.2px;background:linear-gradient(#e0e0e0,#c7c7c7);border-top:1px solid #b2b2b2;border-radius:0 0 3.5px 3.5px"></div>
</body></html>
